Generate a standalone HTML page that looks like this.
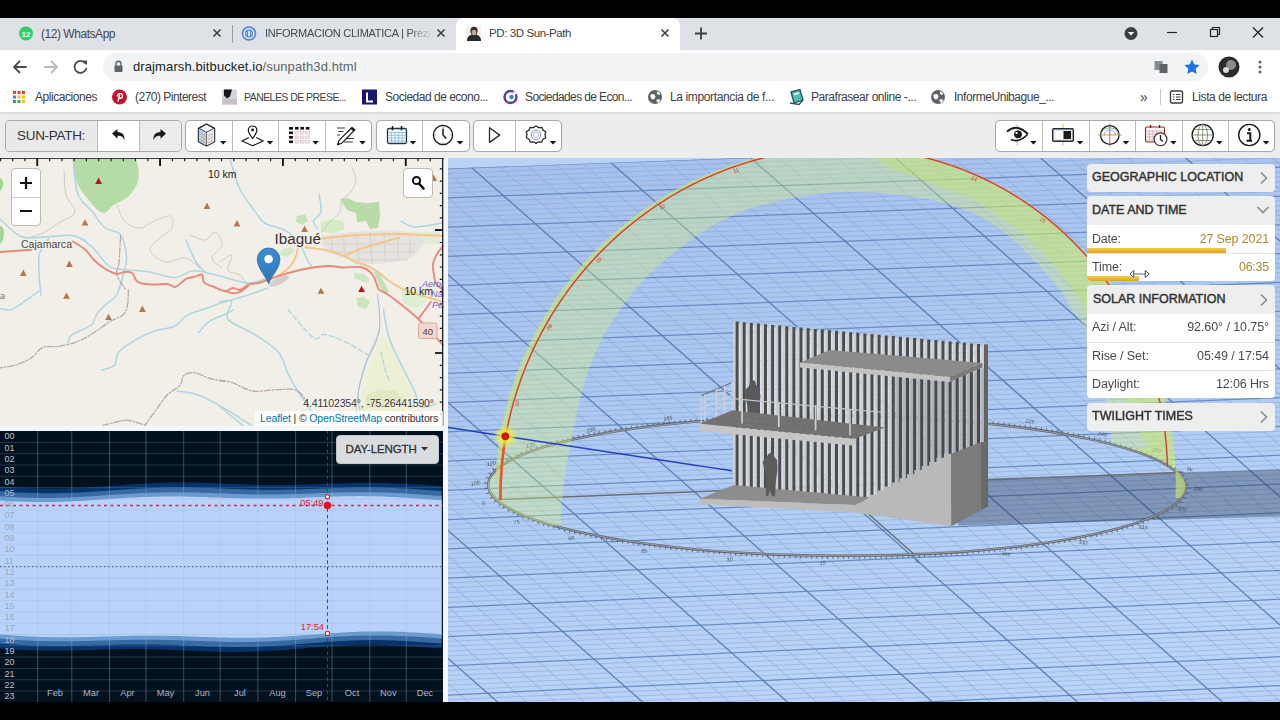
<!DOCTYPE html>
<html lang="es">
<head>
<meta charset="utf-8">
<title>PD: 3D Sun-Path</title>
<style>
*{box-sizing:border-box;margin:0;padding:0}
html,body{width:1280px;height:720px;overflow:hidden;background:#000}
body{font-family:"Liberation Sans",sans-serif;position:relative;color:#222}
.abs{position:absolute}
#top{left:0;top:0;width:1280px;height:18px;background:#000}
#bot{left:0;top:702px;width:1280px;height:18px;background:#000}
#tabs{left:0;top:18px;width:1280px;height:32px;background:#dee1e6}
#addr{left:0;top:50px;width:1280px;height:34px;background:#fff}
#bm{left:0;top:84px;width:1280px;height:29px;background:#fff;border-bottom:1px solid #dadce0}
.tabtxt{position:absolute;margin-top:.5px;font-size:12px;color:#45494d;white-space:nowrap;letter-spacing:-0.1px}
.bmtxt{position:absolute;top:6px;font-size:12px;color:#3c4043;white-space:nowrap;letter-spacing:-0.15px}
#omni{left:103px;top:53px;width:1105px;height:28px;border-radius:14px;background:#f1f3f4}
#tool{left:0;top:113px;width:1280px;height:45px;background:#ededed;border-top:1px solid #e0e0e0}
.grp{position:absolute;top:120px;height:32px;border:1px solid #a9a9a9;border-radius:5px;background:#fff;overflow:hidden;box-shadow:0 0 1px rgba(0,0,0,.15)}
.grp i{position:absolute;top:0;width:1px;height:30px;background:#bdbdbd}

.ph{letter-spacing:0;position:absolute;left:1086.5px;width:188px;background:#eeeeee;font-weight:normal;-webkit-text-stroke:.45px #333;font-size:12.500px;color:#333;padding-left:5.500px;white-space:nowrap}
.pr{position:absolute;left:1086.5px;width:188px;background:#fff;font-size:12.500px;color:#4a4a4a;white-space:nowrap;letter-spacing:-.08px;border-top:1px solid #e4e4e4}
.pr b{position:absolute;left:5.500px;font-weight:normal}
.pr s{position:absolute;right:5.500px;text-decoration:none}
.chev{position:absolute;right:6px}
</style>
</head>
<body>
<div class="abs" id="top"></div>
<div class="abs" id="tabs"></div>
<div class="abs" id="addr"></div>
<div class="abs" id="omni"></div>
<div class="abs" id="bm"></div>
<div class="abs" id="tool"></div>

<!-- chrome tabs -->
<div class="abs" style="left:456px;top:18px;width:224px;height:32px;background:#fff;border-radius:8px 8px 0 0"></div>
<svg class="abs" style="left:0;top:18px" width="1280" height="95" viewBox="0 18 1280 95">
 <circle cx="26" cy="33.5" r="7" fill="#2bd366"/>
 <text x="26" y="36.5" font-size="8" font-weight="bold" fill="#fff" text-anchor="middle" font-family="Liberation Sans, sans-serif">12</text>
 <g stroke="#3c4043" stroke-width="1.6" fill="none">
  <path d="M213.5 29.5l7 7m0-7l-7 7"/><path d="M437.5 29.5l7 7m0-7l-7 7"/><path d="M661.5 29.5l7 7m0-7l-7 7"/>
  <path d="M695 33.5h12m-6-6v12" stroke-width="1.8"/>
 </g>
 <rect x="232" y="25" width="1" height="18" fill="#9a9da1"/>
 <circle cx="249" cy="33.5" r="6.5" fill="#dbe7fb" stroke="#4f83d8" stroke-width="1.6"/>
 <circle cx="249" cy="33.5" r="3.4" fill="none" stroke="#4f83d8" stroke-width="1.2"/>
 <path d="M247.5 31v5M250.5 31v5" stroke="#4f83d8" stroke-width="1"/>
 <!-- favicon portrait -->
 <rect x="466" y="26" width="15" height="15" fill="#f4f1ee"/>
 <ellipse cx="474" cy="31" rx="3.6" ry="4.2" fill="#3a2f2a"/>
 <path d="M467 41c0-5 3-6.500 7-6.500s7 1.500 7 6.500z" fill="#2a2a2e"/>
 <ellipse cx="474" cy="32.500" rx="2.300" ry="2.800" fill="#c9a791"/>
 <!-- window buttons -->
 <circle cx="1131" cy="33.5" r="6.500" fill="#3c4043"/><path d="M1127.800 32l3.200 3.600 3.200-3.600z" fill="#fff"/>
 <path d="M1167 32.500h10" stroke="#222" stroke-width="1.200"/>
 <rect x="1210.500" y="29.500" width="7" height="7" fill="none" stroke="#222" stroke-width="1.200"/><path d="M1212.500 29.500v-2h7v7h-2" fill="none" stroke="#222" stroke-width="1.200"/>
 <path d="M1253 27.500l10 10m0-10l-10 10" stroke="#222" stroke-width="1.300"/>
 <!-- nav -->
 <g stroke="#4a4d51" stroke-width="1.800" fill="none" stroke-linecap="round" stroke-linejoin="round">
  <path d="M26 67H14.500m5-5.500L14 67l5.500 5.500"/>
  <path d="M45 67h11.500m-5-5.500L57 67l-5.500 5.500" stroke="#b8bbbe"/>
  <path d="M85.500 63.500a6 6 0 1 0 .8 5"/>
 </g>
 <path d="M82.500 60.500h4.500v4.500z" fill="#4a4d51"/>
 <rect x="114.500" y="65.500" width="8" height="6.500" rx="1" fill="#5f6368"/><path d="M116 66v-2.200a2.500 2.500 0 0 1 5 0V66" fill="none" stroke="#5f6368" stroke-width="1.400"/>
 <!-- right of omnibox -->
 <rect x="1154.500" y="61" width="8" height="9" fill="#8a8d91"/><rect x="1159.500" y="64" width="8" height="9" fill="#5f6368"/>
 <path d="M1192 59.500l2.300 4.900 5.300.6-3.900 3.700 1 5.300-4.700-2.600-4.700 2.600 1-5.300-3.900-3.700 5.300-.6z" fill="#1a73e8"/>
 <circle cx="1229" cy="67" r="10.500" fill="#2b2b2b"/><circle cx="1231" cy="65" r="5" fill="#8d8d8d"/><circle cx="1226" cy="70" r="3" fill="#d9d9d9"/>
 <circle cx="1260" cy="62" r="1.500" fill="#5f6368"/><circle cx="1260" cy="67" r="1.500" fill="#5f6368"/><circle cx="1260" cy="72" r="1.500" fill="#5f6368"/>
 <!-- bookmarks icons -->
 <g>
  <rect x="13" y="91" width="3" height="3" fill="#ea4335"/><rect x="17.500" y="91" width="3" height="3" fill="#ea4335"/><rect x="22" y="91" width="3" height="3" fill="#ea4335"/>
  <rect x="13" y="95.500" width="3" height="3" fill="#4285f4"/><rect x="17.500" y="95.500" width="3" height="3" fill="#fbbc05"/><rect x="22" y="95.500" width="3" height="3" fill="#fbbc05"/>
  <rect x="13" y="100" width="3" height="3" fill="#34a853"/><rect x="17.500" y="100" width="3" height="3" fill="#34a853"/><rect x="22" y="100" width="3" height="3" fill="#fbbc05"/>
 </g>
 <circle cx="119.500" cy="97" r="7.500" fill="#c8102e"/><path d="M118 101.500l1.500-6.500m-2 1.500c-.8-3 4.800-4.200 5-0.800.2 2.600-2.600 3.400-3.200 1.600" stroke="#fff" stroke-width="1.400" fill="none"/>
 <rect x="222" y="89.500" width="15" height="15" fill="#d8d2d9"/><path d="M224 89.500h8l-2 7-3 2-3-3z" fill="#15151c"/><rect x="222" y="99" width="15" height="5.500" fill="#c9bfc4"/>
 <rect x="362" y="89.500" width="15" height="15" fill="#1b1470"/><path d="M367 92.500v9h6" stroke="#fff" stroke-width="2" fill="none"/>
 <circle cx="510.500" cy="97" r="6" fill="none" stroke="#5b3d99" stroke-width="2.400"/><circle cx="511.500" cy="97" r="2.300" fill="#2a8dd6"/><path d="M513 91l4 2-3 3z" fill="#fff"/>
 <g fill="#5f6368"><circle cx="655" cy="97" r="7"/><circle cx="938" cy="97" r="7"/></g>
 <g fill="#fff"><path d="M650.500 94.500l3.500-.5 1.500 2.500-1 2.500-2.500.5-1.500-2.500zM656 100l3-1 1.500 1.500-2.500 2.500zM657 91.500l3 1.500-.5 2-2.500-1z"/><path d="M933.500 94.500l3.500-.5 1.500 2.500-1 2.500-2.500.5-1.500-2.500zM939 100l3-1 1.500 1.500-2.500 2.500zM940 91.500l3 1.500-.5 2-2.500-1z"/></g>
 <path d="M791 92l9-2.500 3 10.500-9 3z" fill="#4dbfa8" stroke="#2d4f63" stroke-width="1.300"/><path d="M794 94.500l5-1.500" stroke="#fff" stroke-width="1.500"/><path d="M790 103l9 1.500 4-4.500" fill="none" stroke="#2d4f63" stroke-width="1.300"/>
 <text x="1140" y="101.500" font-size="14" fill="#3c4043" font-family="Liberation Sans, sans-serif">»</text>
 <rect x="1160" y="89" width="1" height="16" fill="#c4c7cb"/>
 <rect x="1170.500" y="91" width="12" height="12" rx="1.500" fill="none" stroke="#3c4043" stroke-width="1.400"/><path d="M1173 94.500h1.500m1.500 0h4.500M1173 97h1.500m1.500 0h4.500M1173 99.500h1.500m1.500 0h4.500" stroke="#3c4043" stroke-width="1.200"/>
</svg>
<div class="tabtxt" style="left:41px;top:26px;letter-spacing:-.46px">(12) WhatsApp</div>
<div class="tabtxt" style="left:265px;top:26.5px;font-size:11px;letter-spacing:-.25px;width:168px;overflow:hidden;-webkit-mask-image:linear-gradient(90deg,#000 85%,transparent)">INFORMACION CLIMATICA | Prezi</div>
<div class="tabtxt" style="left:489px;top:26px;color:#3c4043;font-size:11.5px;letter-spacing:-.41px">PD: 3D Sun-Path</div>
<div class="abs" style="left:133px;top:59px;font-size:13px;color:#202124;white-space:nowrap;letter-spacing:.11px">drajmarsh.bitbucket.io<span style="color:#5f6368">/sunpath3d.html</span></div>
<div class="bmtxt" style="left:35px;top:90px;letter-spacing:-0.45px">Aplicaciones</div>
<div class="bmtxt" style="left:135px;top:90px;letter-spacing:-0.51px">(270) Pinterest</div>
<div class="bmtxt" style="left:244px;top:91px;font-size:10.5px;letter-spacing:-.55px">PANELES DE PRESE...</div>
<div class="bmtxt" style="left:385px;top:90px;letter-spacing:-0.49px">Sociedad de econo...</div>
<div class="bmtxt" style="left:525px;top:90px;letter-spacing:-0.62px">Sociedades de Econ...</div>
<div class="bmtxt" style="left:670px;top:90px;letter-spacing:-0.37px">La importancia de f...</div>
<div class="bmtxt" style="left:811px;top:90px;letter-spacing:-0.45px">Parafrasear online -...</div>
<div class="bmtxt" style="left:954px;top:90px;letter-spacing:-0.46px">InformeUnibague_...</div>
<div class="bmtxt" style="left:1192px;top:90px;letter-spacing:-0.40px">Lista de lectura</div>


<!-- app toolbar -->
<div class="grp" style="left:5px;width:177px"><div class="abs" style="left:0;top:0;width:92px;height:30px;background:#e9e9e9"></div><div class="abs" style="left:134px;top:0;width:42px;height:30px;background:#ececec"></div><i style="left:91px"></i><i style="left:133px"></i></div>
<div class="grp" style="left:185px;width:187px"><i style="left:46px"></i><i style="left:92px"></i><i style="left:139px"></i></div>
<div class="grp" style="left:376px;width:94px"><i style="left:45px"></i></div>
<div class="grp" style="left:473px;width:89px"><i style="left:41px"></i></div>
<div class="grp" style="left:995px;width:280px"><i style="left:46px"></i><i style="left:93px"></i><i style="left:139px"></i><i style="left:186px"></i><i style="left:232px"></i></div>
<div class="abs" style="left:17px;top:128px;font-size:13.5px;color:#333;white-space:nowrap;letter-spacing:-.3px">SUN-PATH:</div>
<svg class="abs" style="left:0;top:113px" width="1280" height="45" viewBox="0 113 1280 45">
 <g fill="#111">
  <path d="M220 141h6.400l-3.200 3.600z"/><path d="M266.800 141h6.400l-3.200 3.600z"/><path d="M312.400 141h6.400l-3.200 3.600z"/><path d="M359.300 141h6.400l-3.200 3.600z"/>
  <path d="M409.800 141h6.400l-3.200 3.600z"/><path d="M456.800 141h6.400l-3.200 3.600z"/><path d="M549.800 141h6.400l-3.200 3.600z"/>
  <path d="M1030.200 141h6.400l-3.200 3.600z"/><path d="M1076.800 141h6.400l-3.200 3.600z"/><path d="M1122.800 141h6.400l-3.200 3.600z"/><path d="M1170.200 141h6.400l-3.200 3.600z"/><path d="M1216.100 141h6.400l-3.200 3.600z"/><path d="M1262.800 141h6.400l-3.200 3.600z"/>
 </g>
 <!-- undo / redo -->
 <path d="M112 133.500l5.500-4.500v3c5 .3 7.500 3 7 8.500-1-3.500-3-4.800-7-4.800v3z" fill="#1a1a1a"/>
 <path d="M166 133.500l-5.500-4.500v3c-5 .3-7.500 3-7 8.500 1-3.500 3-4.800 7-4.800v3z" fill="#1a1a1a"/>
 <!-- building -->
 <path d="M206.500 124l8 4.300v13.400l-8 4.300-8-4.300v-13.400z" fill="#eef3fb" stroke="#1a1a1a" stroke-width="1.400" stroke-linejoin="round"/>
 <path d="M198.500 128.300l8 4.300 8-4.300M206.500 132.600v13.400" fill="none" stroke="#1a1a1a" stroke-width="1.100"/>
 <path d="M198.800 128.500l7.500 4v13l-7.500-4z" fill="#b9cdf0"/><path d="M206.800 132.600l7.400-4v13l-7.400 4z" fill="#e6e9f5"/>
 <g fill="#e0a63c"><rect x="201" y="133.500" width="1.300" height="1.600"/><rect x="203.500" y="134.800" width="1.300" height="1.600"/><rect x="201" y="136.800" width="1.300" height="1.600"/><rect x="203.500" y="138.100" width="1.300" height="1.600"/><rect x="201" y="140.100" width="1.300" height="1.600"/><rect x="203.500" y="141.400" width="1.300" height="1.600"/>
 <rect x="208.500" y="134.800" width="1.300" height="1.600"/><rect x="211" y="133.500" width="1.300" height="1.600"/><rect x="208.500" y="138.100" width="1.300" height="1.600"/><rect x="211" y="136.800" width="1.300" height="1.600"/><rect x="208.500" y="141.400" width="1.300" height="1.600"/><rect x="211" y="140.100" width="1.300" height="1.600"/></g>
 <!-- map pin -->
 <path d="M252.600 138.500c-3-4-4.300-6-4.300-8.200a4.300 4.300 0 0 1 8.600 0c0 2.200-1.300 4.200-4.300 8.200z" fill="#fff" stroke="#1a1a1a" stroke-width="1.200"/><circle cx="252.600" cy="130" r="1.400" fill="#1a1a1a"/>
 <path d="M249 137.500l-7 3.500 10.600 4.800 10.600-4.800-7-3.500" fill="none" stroke="#1a1a1a" stroke-width="1.200" stroke-linejoin="round"/>
 <!-- table -->
 <g fill="#111"><rect x="289" y="127" width="4" height="2.600"/><rect x="295" y="127" width="3.600" height="2.600"/><rect x="300.400" y="127" width="3.600" height="2.600"/><rect x="305.800" y="127" width="3.600" height="2.600"/><rect x="289" y="131.500" width="4" height="2.600"/><rect x="289" y="136" width="4" height="2.600"/><rect x="289" y="140.500" width="4" height="2.600"/></g>
 <g fill="#f4ecef" stroke="#c9a5a8" stroke-width=".5"><rect x="295" y="131.500" width="3.600" height="2.600"/><rect x="300.400" y="131.500" width="3.600" height="2.600"/><rect x="305.800" y="131.500" width="3.600" height="2.600"/><rect x="295" y="136" width="3.600" height="2.600"/><rect x="300.400" y="136" width="3.600" height="2.600"/><rect x="305.800" y="136" width="3.600" height="2.600"/><rect x="295" y="140.500" width="3.600" height="2.600"/><rect x="300.400" y="140.500" width="3.600" height="2.600"/><rect x="305.800" y="140.500" width="3.600" height="2.600"/></g>
 <!-- pencil + lines -->
 <g stroke="#3a3a3a" stroke-width="1.100"><path d="M337 128h8M338.500 131.500h5M337 135h3M346 138.500h8M344 142h9"/></g>
 <path d="M352 127.500l2.800 2.300-13 13.400-4.300 1.600 1.500-4.400z" fill="#fff" stroke="#1a1a1a" stroke-width="1.200" stroke-linejoin="round"/><path d="M350.500 128.800l3 2.600 1.300-1.500-2.800-2.400z" fill="#1a1a1a"/><path d="M337.500 144.800l2.300-.8-1.500-1.500z" fill="#1a1a1a"/>
 <!-- calendar -->
 <rect x="387.500" y="128.500" width="19" height="15" rx="1.500" fill="#f2f8fc" stroke="#1c3a4a" stroke-width="1.300"/>
 <g stroke="#7fb3cf" stroke-width=".7"><path d="M388 132.500h18M388 135.300h18M388 138.100h18M388 140.900h18M391.500 132v11M395 132v11M398.600 132v11M402.200 132v11"/></g>
 <path d="M392.500 126v4.200M401.500 126v4.200" stroke="#1a1a1a" stroke-width="1.500"/>
 <!-- clock -->
 <circle cx="443" cy="135" r="9.600" fill="#fff" stroke="#1a1a1a" stroke-width="1.300"/>
 <path d="M443 128.500v6.500l3.300 3.400" fill="none" stroke="#1a1a1a" stroke-width="1.500"/>
 <path d="M443 126v2M443 142v2M434 135h2M450 135h2" stroke="#d98b3a" stroke-width="1"/>
 <!-- play -->
 <path d="M489.500 127.800v14.600l10.200-7.300z" fill="#fff" stroke="#2a2a2a" stroke-width="1.300" stroke-linejoin="round"/>
 <!-- gear -->
 <path d="M536 124.800l2.700 1.600 3.100-.3 1.200 2.800 2.700 1.600-.7 3 .7 3-2.700 1.600-1.200 2.800-3.100-.3-2.700 1.600-2.700-1.600-3.100.3-1.200-2.800-2.700-1.600.7-3-.7-3 2.700-1.600 1.200-2.800 3.100.3z" fill="#fff" stroke="#2a2a2a" stroke-width="1.300" stroke-linejoin="round" transform="translate(0,1.200)"/>
 <circle cx="536" cy="135" r="4.600" fill="none" stroke="#8a8aa8" stroke-width="1"/><circle cx="536" cy="135" r="2.600" fill="none" stroke="#9ab0d8" stroke-width=".9"/>
 <!-- eye -->
 <path d="M1017.200 124v22" stroke="#e8a860" stroke-width=".9"/>
 <path d="M1007 131.500c4-3.200 8-4.300 12-3.300 3.500.9 6.500 3.200 9 5.800" fill="none" stroke="#1a1a1a" stroke-width="2"/>
 <path d="M1011 139.500c5 2.300 11 .5 16.500-5" fill="none" stroke="#1a1a1a" stroke-width="1.700"/>
 <circle cx="1018" cy="134.300" r="3.900" fill="#1a1a1a"/><circle cx="1016.600" cy="133" r="1.100" fill="#fff"/>
 <!-- contrast rect -->
 <path d="M1063 124v22" stroke="#e8a860" stroke-width=".9"/>
 <rect x="1052.700" y="128.700" width="20.600" height="12.600" rx="1" fill="#dbe9f6" stroke="#2a2a2a" stroke-width="1.400"/>
 <rect x="1055.500" y="131" width="8" height="8" fill="#fff"/><rect x="1063.500" y="131" width="7.500" height="8" fill="#1a1a1a"/>
 <!-- crosshair circle -->
 <circle cx="1109.800" cy="135" r="9.300" fill="#fff" stroke="#1a1a1a" stroke-width="1.300"/>
 <path d="M1098 135h24" stroke="#c9963c" stroke-width=".9"/><path d="M1109.800 123.500v23" stroke="#b24a8a" stroke-width=".9"/>
 <path d="M1101 135c1-5 4-7 8.800-7s7.800 2 8.800 7" fill="none" stroke="#5aa7a0" stroke-width=".8"/><path d="M1104 135c.8-3.500 2.800-5 5.800-5s5 1.500 5.800 5" fill="none" stroke="#8d7fc0" stroke-width=".7"/>
 <!-- calendar clock -->
 <rect x="1145.500" y="127" width="19" height="15" rx="1.500" fill="#fdf6f4" stroke="#8a2a2a" stroke-width="1.100"/>
 <g stroke="#d39ab0" stroke-width=".7"><path d="M1146 131h18M1146 134h18M1146 137h18M1146 140h18M1149.500 130.500v11M1153 130.500v11M1156.600 130.500v11M1160.200 130.500v11"/></g>
 <path d="M1150.500 125v3M1159.500 125v3" stroke="#5a1a1a" stroke-width="1.300"/>
 <circle cx="1160.500" cy="139.300" r="6.400" fill="#fff" stroke="#3a3a3a" stroke-width="1.200"/><path d="M1160.500 135v4.500l2.300 2" fill="none" stroke="#1a1a1a" stroke-width="1.300"/>
 <!-- globe -->
 <circle cx="1202.700" cy="135" r="10.600" fill="#fff" stroke="#1a1a1a" stroke-width="1.300"/>
 <g fill="none" stroke="#6a7a5a" stroke-width=".8"><ellipse cx="1202.700" cy="135" rx="4.800" ry="10.600"/><path d="M1202.700 124.400v21.200M1192.100 135h21.200M1194 129.500h17.400M1194 140.500h17.400"/></g>
 <!-- info -->
 <circle cx="1249.300" cy="135" r="10.600" fill="#fff" stroke="#1a1a1a" stroke-width="1.400"/>
 <circle cx="1249.300" cy="129.600" r="1.500" fill="#1a1a1a"/><path d="M1247 133.200h3.300v7.300M1246.500 140.700h5.600" fill="none" stroke="#1a1a1a" stroke-width="2"/>
</svg>

<!-- map -->
<div class="abs" style="left:0;top:157px;width:449px;height:545px;background:#f3f6fa"></div>
<svg class="abs" style="left:0;top:158px" width="443.500" height="268" viewBox="0 158 443.500 268">
<rect x="0" y="158" width="444" height="272" fill="#f2efe9"/>
<path d="M73 158h62c4 8 5 18 2 26-4 10-12 16-20 19-6 2-8 8-12 10-5 0-9-4-13-9-8-9-15-18-17-28z" fill="#b5dba7"/>
<path d="M0 178c4 1 4 8 1 12l-1 1zM0 226c5 0 5 10 2 16l-2 2z" fill="#9fd694"/>
<path d="M340 199l8-1 7 4 12 1 12-1 1 14-2 12-8 1-4-8-9 1-1-9-9-3z" fill="#b8dba9"/>
<path d="M321 222l10-3 12 2 2 8-10 4-14-1z" fill="#d5ebc6"/><path d="M297 216l8-2 3 7-6 4-6-3z" fill="#c6e3b8"/>
<path d="M281 250l10-3 4 4-8 6-7-2z" fill="#d3e8c6"/><path d="M354 273l10 1 6 6-4 3-12-5z" fill="#d0e6c2"/>
<path d="M356 298l8-1 6 5-4 7-8-2z" fill="#c9e3ba"/><path d="M401 290h24l1 12-10 6-13-4z" fill="#dcefd0"/>
<path d="M380 336l7 3 14 28 13 26 6 14-20 6-24 3-16-4 1-14 5-24 9-22z" fill="#eef0d6"/><path d="M366 395l14-6 16 2 8 10-20 6-18 1z" fill="#dfe8c2"/>
<path d="M400 232h40v12h-38z" fill="#e2ecd6"/><path d="M374 272l4 12 6 10 5-2-6-12-5-10z" fill="#c3e0b6"/>
<path d="M321 236l30-4 40-2 26 3 8 10-12 14-20 6-30 1-26-8-14-9z" fill="#e6e2de"/>
<g stroke="#cfcac6" stroke-width=".7" fill="none"><path d="M332 236v18M343 234l2 24M356 232l3 30M370 232l2 32M384 232l1 30M398 233v26M410 236v18M326 244h90M330 252h84M352 260h56"/></g>
<path d="M64.0 170.0 C64.3 174.2 64.2 188.0 66.0 195.0 C67.8 202.0 76.0 207.5 75.0 212.0 C74.0 216.5 65.0 218.7 60.0 222.0 C55.0 225.3 50.3 229.3 45.0 232.0 C39.7 234.7 30.8 237.0 28.0 238.0" fill="none" stroke="#c4bfba" stroke-width="0.8" stroke-linecap="round" stroke-linejoin="round" />
<path d="M117.0 205.0 C118.3 207.8 121.2 218.2 125.0 222.0 C128.8 225.8 135.5 228.0 140.0 228.0 C144.5 228.0 147.0 224.0 152.0 222.0 C157.0 220.0 166.7 215.0 170.0 216.0 C173.3 217.0 173.7 224.3 172.0 228.0 C170.3 231.7 163.7 234.3 160.0 238.0 C156.3 241.7 149.2 246.0 150.0 250.0 C150.8 254.0 159.2 260.7 165.0 262.0 C170.8 263.3 179.2 257.0 185.0 258.0 C190.8 259.0 197.5 266.3 200.0 268.0" fill="none" stroke="#c4bfba" stroke-width="0.8" stroke-linecap="round" stroke-linejoin="round" />
<path d="M190.0 235.0 C192.5 235.8 200.8 240.5 205.0 240.0 C209.2 239.5 212.2 231.2 215.0 232.0 C217.8 232.8 222.5 240.7 222.0 245.0 C221.5 249.3 212.0 254.2 212.0 258.0 C212.0 261.8 220.3 266.3 222.0 268.0" fill="none" stroke="#c4bfba" stroke-width="0.8" stroke-linecap="round" stroke-linejoin="round" />
<path d="M220.0 262.0 C222.0 260.8 230.7 253.7 232.0 255.0 C233.3 256.3 226.7 266.7 228.0 270.0 C229.3 273.3 237.0 272.7 240.0 275.0 C243.0 277.3 245.0 282.5 246.0 284.0" fill="none" stroke="#c4bfba" stroke-width="0.8" stroke-linecap="round" stroke-linejoin="round" />
<path d="M352.0 168.0 C352.7 170.0 356.2 176.0 356.0 180.0 C355.8 184.0 353.3 188.7 351.0 192.0 C348.7 195.3 343.8 196.7 342.0 200.0 C340.2 203.3 342.0 208.3 340.0 212.0 C338.0 215.7 333.0 218.7 330.0 222.0 C327.0 225.3 323.3 230.3 322.0 232.0" fill="none" stroke="#c4bfba" stroke-width="0.8" stroke-linecap="round" stroke-linejoin="round" />
<path d="M379.5 329.0 C378.8 331.7 377.2 339.5 375.0 345.0 C372.8 350.5 368.3 356.2 366.0 362.0 C363.7 367.8 362.5 373.7 361.0 380.0 C359.5 386.3 357.8 392.0 357.0 400.0 C356.2 408.0 356.2 423.3 356.0 428.0" fill="none" stroke="#c4bfba" stroke-width="0.8" stroke-linecap="round" stroke-linejoin="round" />
<path d="M0.0 219.0 C3.6 221.9 13.3 233.8 21.4 236.7 C29.5 239.6 39.8 236.9 48.6 236.7 C57.4 236.5 66.9 234.1 74.0 235.7 C81.1 237.3 85.6 241.3 91.4 246.4 C97.2 251.5 103.5 262.1 109.0 266.0 C114.5 269.9 118.0 268.9 124.5 269.8 C131.0 270.8 139.4 270.4 147.8 271.7 C156.2 273.0 167.2 277.7 175.0 277.5 C182.8 277.3 186.2 270.7 194.5 270.7 C202.8 270.7 215.9 275.4 225.0 277.5 C234.1 279.6 241.8 282.9 249.0 283.0 C256.2 283.1 264.8 278.8 268.0 278.0" fill="none" stroke="#add6e1" stroke-width="1.5" stroke-linecap="round" stroke-linejoin="round" />
<path d="M73.0 158.0 C73.8 164.0 74.4 184.8 77.8 194.0 C81.2 203.2 88.9 207.3 93.4 213.0 C97.9 218.7 100.5 224.4 105.0 228.0 C109.5 231.6 117.0 230.1 120.6 234.8 C124.2 239.5 125.8 250.1 126.4 256.0 C127.1 261.9 126.1 263.5 124.5 270.0 C122.9 276.5 119.3 289.7 116.7 295.0 C114.1 300.3 112.2 298.6 109.0 301.7 C105.8 304.8 100.2 309.4 97.3 313.3 C94.4 317.2 95.6 321.4 91.4 325.0 C87.2 328.6 75.9 331.8 72.0 334.7 C68.1 337.6 68.7 341.2 68.0 342.5" fill="none" stroke="#add6e1" stroke-width="1.5" stroke-linecap="round" stroke-linejoin="round" />
<path d="M40.8 295.0 C40.5 288.5 37.7 265.4 39.0 256.0 C40.3 246.6 47.0 241.5 48.6 238.6" fill="none" stroke="#add6e1" stroke-width="1.5" stroke-linecap="round" stroke-linejoin="round" />
<path d="M0.0 308.5 C1.9 308.7 7.5 310.8 11.7 309.5 C15.9 308.2 20.8 303.8 25.3 300.7 C29.9 297.6 36.7 292.6 39.0 291.0" fill="none" stroke="#add6e1" stroke-width="1.5" stroke-linecap="round" stroke-linejoin="round" />
<path d="M268.0 288.0 C264.2 289.3 252.2 293.7 245.0 296.0 C237.8 298.3 231.5 299.6 225.0 301.7 C218.5 303.8 212.4 306.2 206.0 308.5 C199.6 310.8 191.9 312.4 186.7 315.3 C181.5 318.2 180.2 323.4 175.0 326.0 C169.8 328.6 162.1 328.5 155.6 330.8 C149.1 333.1 142.2 336.0 136.0 339.6 C129.8 343.2 122.1 348.0 118.6 352.2 C115.0 356.4 117.5 362.0 114.7 365.0 C111.9 368.0 104.1 369.2 102.0 370.0" fill="none" stroke="#add6e1" stroke-width="1.5" stroke-linecap="round" stroke-linejoin="round" />
<path d="M233.0 310.0 C231.7 310.7 228.8 312.5 225.0 314.3 C221.2 316.1 214.4 317.9 210.0 321.0 C205.6 324.1 200.3 330.8 198.4 332.8" fill="none" stroke="#add6e1" stroke-width="1.5" stroke-linecap="round" stroke-linejoin="round" />
<path d="M177.0 391.0 C180.6 391.7 190.4 392.1 198.4 395.0 C206.4 397.9 217.6 404.4 225.0 408.6 C232.4 412.8 238.0 416.8 243.0 420.0 C248.0 423.2 253.0 426.7 255.0 428.0" fill="none" stroke="#add6e1" stroke-width="1.5" stroke-linecap="round" stroke-linejoin="round" />
<path d="M229.7 158.0 C231.3 163.0 235.3 179.1 239.5 188.0 C243.7 196.9 250.8 205.6 255.0 211.4 C259.2 217.2 259.8 219.9 264.7 223.0 C269.6 226.1 278.7 227.1 284.2 230.0 C289.7 232.9 293.9 235.6 297.8 240.6 C301.7 245.6 305.2 255.8 307.5 260.0 C309.8 264.2 310.8 265.0 311.4 266.0" fill="none" stroke="#add6e1" stroke-width="1.5" stroke-linecap="round" stroke-linejoin="round" />
<path d="M319.0 194.0 C319.3 196.9 321.9 206.9 321.0 211.4 C320.1 215.9 314.0 218.1 313.4 221.0 C312.8 223.9 316.6 227.7 317.3 229.0" fill="none" stroke="#add6e1" stroke-width="1.5" stroke-linecap="round" stroke-linejoin="round" />
<path d="M401.0 221.0 C403.2 222.0 407.7 226.7 414.5 227.0 C421.3 227.3 437.2 223.7 441.8 223.0" fill="none" stroke="#add6e1" stroke-width="1.5" stroke-linecap="round" stroke-linejoin="round" />
<path d="M220.0 301.7 C221.9 301.7 230.4 298.8 231.7 301.7 C233.0 304.6 223.9 313.5 227.8 319.0 C231.7 324.5 246.6 329.2 255.0 334.7 C263.4 340.2 272.9 345.7 278.4 352.2 C283.9 358.7 284.8 367.1 288.0 373.6 C291.2 380.1 294.2 385.1 297.8 391.0 C301.4 396.9 306.5 403.9 309.5 408.7 C312.5 413.5 314.9 418.1 316.0 420.0" fill="none" stroke="#add6e1" stroke-width="1.5" stroke-linecap="round" stroke-linejoin="round" />
<path d="M220.0 406.7 C221.6 408.0 225.8 411.3 229.7 414.5 C233.6 417.7 241.0 424.1 243.3 426.0" fill="none" stroke="#add6e1" stroke-width="1.5" stroke-linecap="round" stroke-linejoin="round" />
<path d="M383.4 309.5 C384.4 314.4 386.1 328.9 389.3 338.6 C392.6 348.3 398.7 359.1 402.9 367.8 C407.1 376.5 411.6 384.5 414.5 391.0 C417.4 397.5 416.8 404.5 420.4 406.7 C424.0 408.9 433.4 404.4 436.0 404.0" fill="none" stroke="#add6e1" stroke-width="1.5" stroke-linecap="round" stroke-linejoin="round" />
<path d="M186.0 240.0 C187.7 243.7 192.8 256.7 196.0 262.0 C199.2 267.3 203.5 270.3 205.0 272.0" fill="none" stroke="#add6e1" stroke-width="1.5" stroke-linecap="round" stroke-linejoin="round" />
<path d="M377.6 294.0 C377.9 299.8 381.1 318.3 379.5 329.0 C377.9 339.7 371.1 348.9 367.9 358.0 C364.6 367.1 361.6 376.6 360.0 383.4 C358.4 390.2 358.0 394.6 358.0 399.0 C358.0 403.4 359.7 408.2 360.0 410.0" fill="none" stroke="#a7bfd6" stroke-width="1.1" stroke-linecap="round" stroke-linejoin="round" />
<path d="M288.0 309.5 C292.2 314.2 307.2 333.6 313.4 337.7 C319.6 341.8 319.5 333.6 325.0 334.4 C330.5 335.2 339.0 338.9 346.5 342.5 C354.0 346.1 365.9 353.8 369.8 356.0" fill="none" stroke="#a9d3df" stroke-width="1.3" stroke-linecap="round" stroke-linejoin="round" stroke-dasharray="5 3"/>
<path d="M381.0 352.0 C381.8 355.3 384.5 367.0 386.0 372.0 C387.5 377.0 389.3 380.3 390.0 382.0" fill="none" stroke="#a9d3df" stroke-width="1.3" stroke-linecap="round" stroke-linejoin="round" stroke-dasharray="5 3"/>
<path d="M128.3 290.0 C128.2 292.6 128.4 301.4 127.4 305.6 C126.4 309.8 125.6 312.6 122.5 315.3 C119.4 318.0 113.5 319.2 109.0 322.0 C104.5 324.8 100.5 328.6 95.3 331.8 C90.1 335.1 84.0 339.1 77.8 341.5 C71.6 343.9 64.1 345.4 58.3 346.4 C52.5 347.4 47.3 345.5 42.8 347.4 C38.2 349.3 35.5 355.1 31.0 358.0 C26.4 360.9 20.7 363.4 15.5 365.0 C10.3 366.6 2.6 367.3 0.0 367.8" fill="none" stroke="#b9a7ab" stroke-width="1.3" stroke-linecap="round" stroke-linejoin="round" stroke-dasharray="6 2 1.500 2"/>
<path d="M225.0 381.0 C222.5 380.6 215.1 379.9 210.0 378.5 C204.9 377.1 198.9 373.2 194.5 372.7 C190.1 372.2 186.2 373.5 183.8 375.6 C181.4 377.7 182.8 382.1 180.0 385.3 C177.2 388.5 171.4 390.8 167.3 395.0 C163.2 399.2 159.3 405.6 155.6 410.6 C151.9 415.6 146.8 422.8 145.0 425.2" fill="none" stroke="#b9a7ab" stroke-width="1.3" stroke-linecap="round" stroke-linejoin="round" stroke-dasharray="6 2 1.500 2"/>
<path d="M103.0 425.2 C105.3 424.7 112.5 422.8 116.7 422.0 C120.9 421.2 123.7 419.8 128.4 420.3 C133.1 420.8 142.2 424.4 145.0 425.2" fill="none" stroke="#b9a7ab" stroke-width="1.3" stroke-linecap="round" stroke-linejoin="round" stroke-dasharray="6 2 1.500 2"/>
<path d="M220.0 381.0 C221.9 381.2 226.2 380.7 231.7 382.4 C237.2 384.1 245.2 389.8 253.0 391.0 C260.8 392.2 270.9 389.6 278.4 389.6 C285.9 389.6 292.6 388.1 297.8 391.0 C303.0 393.9 307.6 404.1 309.5 406.7" fill="none" stroke="#b9a7ab" stroke-width="1.3" stroke-linecap="round" stroke-linejoin="round" stroke-dasharray="6 2 1.500 2"/>
<path d="M120.6 236.0 C120.3 240.3 119.6 255.5 119.0 262.0 C118.4 268.5 115.8 270.3 117.0 275.0 C118.2 279.7 124.5 287.5 126.0 290.0" fill="none" stroke="#b9a7ab" stroke-width="1.3" stroke-linecap="round" stroke-linejoin="round" stroke-dasharray="6 2 1.500 2"/>
<path d="M321.0 238.7 C325.0 238.2 336.8 236.7 345.0 236.0 C353.2 235.3 360.8 234.8 370.0 234.5 C379.2 234.2 391.7 233.9 400.0 234.0 C408.3 234.1 412.5 234.7 420.0 235.0 C427.5 235.3 440.8 235.6 445.0 235.7" fill="none" stroke="#f3c68e" stroke-width="2" stroke-linecap="round" stroke-linejoin="round" />
<path d="M305.6 247.4 C308.8 247.8 318.5 248.6 325.0 250.0 C331.5 251.4 339.5 254.0 344.5 256.0 C349.5 258.0 351.1 260.3 355.0 262.0 C358.9 263.7 364.1 264.3 367.9 266.0 C371.7 267.7 374.8 269.8 378.0 272.0 C381.2 274.2 383.8 277.2 387.0 279.5 C390.2 281.8 393.7 284.1 397.0 286.0 C400.3 287.9 401.3 289.0 406.8 291.0 C412.3 293.0 424.0 296.2 430.0 298.0 C436.0 299.8 440.8 301.3 443.0 302.0" fill="none" stroke="#f3c68e" stroke-width="2" stroke-linecap="round" stroke-linejoin="round" />
<path d="M346.5 255.0 C348.8 254.0 354.4 251.0 360.0 249.0 C365.6 247.0 373.5 244.9 380.0 243.0 C386.5 241.1 395.8 238.6 399.0 237.7" fill="none" stroke="#f3c68e" stroke-width="2" stroke-linecap="round" stroke-linejoin="round" />
<path d="M297.8 248.4 C297.5 249.7 297.0 253.4 296.0 256.0 C295.0 258.6 293.8 261.5 292.0 264.0 C290.2 266.5 287.6 268.9 285.0 271.0 C282.4 273.1 277.8 275.7 276.4 276.6" fill="none" stroke="#f3c68e" stroke-width="2" stroke-linecap="round" stroke-linejoin="round" />
<path d="M306.0 247.0 C307.0 245.8 309.5 241.4 312.0 240.0 C314.5 238.6 319.5 238.9 321.0 238.7" fill="none" stroke="#f3c68e" stroke-width="2" stroke-linecap="round" stroke-linejoin="round" />
<path d="M0.0 252.0 C2.3 251.8 8.8 251.4 14.0 251.0 C19.2 250.6 28.2 249.9 31.0 249.7" fill="none" stroke="#e8897b" stroke-width="1.9" stroke-linecap="round" stroke-linejoin="round" />
<path d="M73.0 241.5 C75.1 242.9 82.3 247.1 85.6 250.0 C88.9 252.9 90.4 256.3 93.0 259.0 C95.6 261.7 98.3 264.0 101.0 266.0 C103.7 268.0 106.4 269.7 109.0 271.0 C111.6 272.3 114.0 273.8 116.7 274.0 C119.4 274.2 122.5 272.2 125.0 272.0 C127.5 271.8 130.2 271.7 132.0 273.0 C133.8 274.3 134.7 278.3 136.0 280.0 C137.3 281.7 137.2 282.2 140.0 283.0 C142.8 283.8 148.5 284.3 153.0 284.5 C157.5 284.7 163.3 283.6 167.0 284.0 C170.7 284.4 172.7 287.2 175.0 287.0 C177.3 286.8 179.1 284.4 181.0 283.0 C182.9 281.6 184.5 279.5 186.7 278.5 C188.9 277.5 191.4 277.6 194.0 277.0 C196.6 276.4 200.3 273.7 202.0 274.6 C203.7 275.5 202.0 280.3 204.0 282.4 C206.0 284.5 210.5 285.6 214.0 287.0 C217.5 288.4 221.8 290.8 225.0 291.0 C228.2 291.2 230.5 288.2 233.0 288.0 C235.5 287.8 237.3 290.6 240.0 290.0 C242.7 289.4 245.8 285.6 249.0 284.4 C252.2 283.2 255.7 283.8 259.0 283.0 C262.3 282.2 264.1 281.1 268.6 279.5 C273.1 277.9 280.8 275.3 286.0 273.7 C291.2 272.1 295.8 271.0 300.0 270.0 C304.2 269.0 306.6 268.5 311.4 267.8 C316.2 267.1 323.7 266.1 329.0 266.0 C334.3 265.9 338.5 267.4 343.0 267.5 C347.5 267.6 352.5 266.8 356.0 266.9 C359.5 267.0 361.7 267.2 364.0 268.0 C366.3 268.8 368.1 270.2 369.8 271.7 C371.5 273.2 373.0 275.4 374.0 277.0 C375.0 278.6 374.9 279.7 375.6 281.5 C376.3 283.3 377.4 286.6 378.0 288.0 C378.6 289.4 378.0 289.0 379.5 290.0 C381.0 291.0 384.4 292.4 387.0 294.0 C389.6 295.6 391.5 297.0 395.0 299.7 C398.5 302.4 404.1 306.8 408.0 310.0 C411.9 313.2 414.7 315.5 418.4 319.0 C422.1 322.5 425.9 326.7 430.0 331.0 C434.1 335.3 440.8 342.7 443.0 345.0" fill="none" stroke="#e8897b" stroke-width="1.9" stroke-linecap="round" stroke-linejoin="round" />
<path d="M418.4 319.0 C419.5 317.5 422.9 312.9 425.0 310.0 C427.1 307.1 430.0 303.1 431.0 301.7" fill="none" stroke="#e8897b" stroke-width="1.9" stroke-linecap="round" stroke-linejoin="round" />
<path d="M443.0 246.0 C442.0 247.3 438.7 251.0 437.0 254.0 C435.3 257.0 433.5 260.5 433.0 264.0 C432.5 267.5 433.5 271.8 434.0 275.0 C434.5 278.2 434.5 280.9 436.0 283.4 C437.5 285.9 441.8 288.9 443.0 290.0" fill="none" stroke="#e8897b" stroke-width="1.9" stroke-linecap="round" stroke-linejoin="round" />
<path d="M225.0 291.0 C226.2 291.3 229.5 292.8 232.0 293.0 C234.5 293.2 237.3 293.2 240.0 292.0 C242.7 290.8 246.7 287.0 248.0 286.0" fill="none" stroke="#e8897b" stroke-width="1.9" stroke-linecap="round" stroke-linejoin="round" />
<path d="M207.0 202.6l3.4 6.3h-6.8z" fill="#b3784b"/>
<path d="M85.0 219.3l3.4 6.3h-6.8z" fill="#b3784b"/>
<path d="M69.4 260.6l3.4 6.3h-6.8z" fill="#b3784b"/>
<path d="M23.3 269.6l3.4 6.3h-6.8z" fill="#b3784b"/>
<path d="M237.0 220.1l3.4 6.3h-6.8z" fill="#b3784b"/>
<path d="M304.6 225.6l3.4 6.3h-6.8z" fill="#b3784b"/>
<path d="M321.0 287.4l3.4 6.3h-6.8z" fill="#b3784b"/>
<path d="M66.5 292.4l3.4 6.3h-6.8z" fill="#b3784b"/>
<path d="M108.5 313.8l3.4 6.3h-6.8z" fill="#b3784b"/>
<path d="M142.4 305.6l3.4 6.3h-6.8z" fill="#b3784b"/>
<path d="M433.6 174.6l3.4 6.3h-6.8z" fill="#b3784b"/>
<path d="M98.6 177.6l3.4 6.3h-6.8z" fill="#c1121c"/>
<path d="M361.6 285.8l3.4 6.3h-6.8z" fill="#c1121c"/>
<rect x="0" y="158" width="444" height="1" fill="#3a3a3a"/>
<path d="M0.5 158v3.2M12.7 158v3.2M25.0 158v3.2M37.3 158v8M49.6 158v3.2M61.9 158v3.2M74.1 158v3.2M86.4 158v3.2M98.7 158v3.2M111.0 158v3.2M123.3 158v3.2M135.5 158v3.2M147.8 158v3.2M160.1 158v8M172.4 158v3.2M184.7 158v3.2M196.9 158v3.2M209.2 158v3.2M221.5 158v3.2M233.8 158v3.2M246.1 158v3.2M258.3 158v3.2M270.6 158v3.2M282.9 158v8M295.2 158v3.2M307.5 158v3.2M319.7 158v3.2M332.0 158v3.2M344.3 158v3.2M356.6 158v3.2M368.9 158v3.2M381.1 158v3.2M393.4 158v3.2M405.7 158v8M418.0 158v3.2M430.3 158v3.2" stroke="#1a1a1a" stroke-width="1.200" fill="none"/>
<path d="M37.3 158v8M160.1 158v8M282.900 158v8M405.700 158v8" stroke="#111" stroke-width="1.700"/>
<rect x="442" y="158" width="1.300" height="272" fill="#222"/>
<path d="M443 168.8h-3.2M443 181.1h-3.2M443 193.4h-3.2M443 205.6h-3.2M443 217.9h-3.2M443 230.2h-8M443 242.5h-3.2M443 254.8h-3.2M443 267.0h-3.2M443 279.3h-3.2M443 291.6h-3.2M443 303.9h-3.2M443 316.2h-3.2M443 328.4h-3.2M443 340.7h-3.2M443 353.0h-8M443 365.3h-3.2M443 377.6h-3.2M443 389.8h-3.2M443 402.1h-3.2M443 414.4h-3.2M443 426.7h-3.2" stroke="#1a1a1a" stroke-width="1.200" fill="none"/>
<path d="M443 230.200h-8M443 353h-8" stroke="#111" stroke-width="1.700"/>
<rect x="418.500" y="323" width="18.500" height="15.500" rx="2" fill="#f3d6d0" stroke="#d8a9a0" stroke-width="1"/>
<text x="427.800" y="334.500" font-size="9.500" fill="#444" text-anchor="middle" font-family="Liberation Sans, sans-serif">40</text>
<text x="21" y="247.500" font-size="11.500" fill="#4a4a4a" font-family="Liberation Sans, sans-serif" textLength="51" lengthAdjust="spacingAndGlyphs" stroke="#f2efe9" stroke-width="2" paint-order="stroke">Cajamarca</text>
<text x="274.500" y="243.800" font-size="15.500" fill="#333" font-family="Liberation Sans, sans-serif" textLength="46.500" lengthAdjust="spacingAndGlyphs" stroke="#f2efe9" stroke-width="2.500" paint-order="stroke">Ibagué</text>
<text x="208" y="178" font-size="10.500" fill="#222" font-family="Liberation Sans, sans-serif">10 km</text>
<text x="404.500" y="295" font-size="10.500" fill="#222" font-family="Liberation Sans, sans-serif">10 km</text>
<text x="422" y="287" font-size="9" font-style="italic" fill="#6a5fc0" font-family="Liberation Sans, sans-serif">Aerop</text><text x="431" y="297" font-size="9" font-style="italic" fill="#6a5fc0" font-family="Liberation Sans, sans-serif">Nac</text><text x="432" y="308" font-size="9" font-style="italic" fill="#6a5fc0" font-family="Liberation Sans, sans-serif">Per</text>
<text x="0" y="299" font-size="9" font-style="italic" fill="#666" font-family="Liberation Sans, sans-serif">a</text>
<defs><linearGradient id="mk" x1="0" y1="0" x2="0" y2="1"><stop offset="0" stop-color="#3d8ed1"/><stop offset="1" stop-color="#2f76b5"/></linearGradient></defs>
<ellipse cx="279" cy="281" rx="11" ry="3.500" fill="#000" opacity=".13" transform="rotate(-25 279 281)"/>
<path d="M268.600 283.800c-2.500-7.500-11.300-15.500-11.300-24.500a11.300 11.300 0 0 1 22.600 0c0 9-8.800 17-11.300 24.500z" fill="url(#mk)" stroke="#2a68a3" stroke-width=".8"/><circle cx="268.600" cy="259" r="4.300" fill="#fff"/>
</svg>
<div class="abs" style="left:10.500px;top:168px;width:30px;height:58px;background:#fff;border-radius:4px;border:1.500px solid #bdbab5"></div>
<div class="abs" style="left:12px;top:197px;width:28px;height:1px;background:#ccc"></div>
<svg class="abs" style="left:11px;top:168px" width="30" height="58"><path d="M9 15h12M15 9v12M9 43h12" stroke="#111" stroke-width="2.200"/></svg>
<div class="abs" style="left:403px;top:168px;width:30px;height:30px;background:#fff;border-radius:4px;border:1.500px solid #bdbab5"></div>
<svg class="abs" style="left:403px;top:168px" width="30" height="30"><circle cx="13.500" cy="12.500" r="3.600" fill="none" stroke="#111" stroke-width="2"/><path d="M16 15.500l4.500 5" stroke="#111" stroke-width="2.600" stroke-linecap="round"/></svg>
<div class="abs" style="left:303.300px;top:396.500px;font-size:10.500px;color:#333;white-space:nowrap;letter-spacing:-.12px;text-shadow:0 0 2px #fff">4.41102354°, -75.26441590°</div>
<div class="abs" style="left:255px;top:411px;width:188px;height:15px;background:rgba(255,255,255,.8);font-size:10.500px;line-height:15px;padding-left:5px;color:#333;white-space:nowrap;letter-spacing:-.12px"><span style="color:#0078a8">Leaflet</span> | © <span style="color:#0078a8">OpenStreetMap</span> contributors</div>

<!--CHART-START-->
<svg class="abs" style="left:0;top:430.700px" width="443" height="271.300" viewBox="0 430.700 443 271.300">
<rect x="0" y="430" width="443" height="272" fill="#03111f"/>
<path d="M0.0 486.1 L3.6 486.3 L7.3 486.6 L10.9 486.8 L14.6 487.0 L18.2 487.3 L21.9 487.5 L25.5 487.7 L29.2 487.8 L32.8 488.0 L36.5 488.1 L40.1 488.2 L43.8 488.3 L47.4 488.3 L51.1 488.3 L54.7 488.3 L58.4 488.3 L62.0 488.2 L65.7 488.1 L69.3 488.0 L73.0 487.9 L76.6 487.8 L80.3 487.6 L83.9 487.4 L87.6 487.2 L91.2 487.0 L94.9 486.7 L98.5 486.5 L102.2 486.2 L105.8 485.9 L109.5 485.7 L113.1 485.4 L116.8 485.1 L120.4 484.9 L124.1 484.6 L127.7 484.3 L131.4 484.1 L135.0 483.8 L138.7 483.6 L142.3 483.4 L146.0 483.2 L149.6 483.0 L153.3 482.8 L156.9 482.7 L160.6 482.5 L164.2 482.4 L167.9 482.3 L171.5 482.3 L175.2 482.2 L178.8 482.2 L182.5 482.2 L186.1 482.2 L189.8 482.2 L193.4 482.3 L197.1 482.3 L200.7 482.4 L204.4 482.5 L208.0 482.6 L211.7 482.8 L215.3 482.9 L219.0 483.1 L222.6 483.2 L226.3 483.4 L229.9 483.5 L233.6 483.7 L237.2 483.8 L240.9 484.0 L244.5 484.1 L248.2 484.2 L251.8 484.4 L255.5 484.5 L259.1 484.6 L262.8 484.6 L266.4 484.7 L270.1 484.7 L273.7 484.8 L277.4 484.8 L281.0 484.8 L284.7 484.7 L288.3 484.7 L292.0 484.6 L295.6 484.6 L299.3 484.5 L302.9 484.4 L306.6 484.3 L310.2 484.2 L313.9 484.0 L317.5 483.9 L321.2 483.8 L324.8 483.6 L328.5 483.5 L332.1 483.4 L335.8 483.2 L339.4 483.1 L343.1 483.0 L346.7 482.9 L350.4 482.8 L354.0 482.7 L357.7 482.7 L361.3 482.6 L364.9 482.6 L368.6 482.6 L372.2 482.6 L375.9 482.6 L379.5 482.6 L383.2 482.7 L386.8 482.8 L390.5 482.9 L394.1 483.0 L397.8 483.1 L401.4 483.3 L405.1 483.5 L408.7 483.7 L412.4 483.9 L416.0 484.1 L419.7 484.3 L423.3 484.6 L427.0 484.8 L430.6 485.1 L434.3 485.3 L437.9 485.6 L441.6 485.9 L441.6 648.2 L437.9 647.9 L434.3 647.6 L430.6 647.4 L427.0 647.1 L423.3 646.9 L419.7 646.6 L416.0 646.3 L412.4 646.1 L408.7 645.9 L405.1 645.6 L401.4 645.4 L397.8 645.2 L394.1 645.0 L390.5 644.9 L386.8 644.8 L383.2 644.7 L379.5 644.6 L375.9 644.5 L372.2 644.5 L368.6 644.5 L364.9 644.5 L361.3 644.5 L357.7 644.6 L354.0 644.7 L350.4 644.9 L346.7 645.0 L343.1 645.2 L339.4 645.4 L335.8 645.6 L332.1 645.8 L328.5 646.1 L324.8 646.3 L321.2 646.6 L317.5 646.9 L313.9 647.2 L310.2 647.5 L306.6 647.8 L302.9 648.1 L299.3 648.4 L295.6 648.7 L292.0 649.0 L288.3 649.3 L284.7 649.6 L281.0 649.8 L277.4 650.1 L273.7 650.3 L270.1 650.5 L266.4 650.7 L262.8 650.9 L259.1 651.1 L255.5 651.2 L251.8 651.3 L248.2 651.4 L244.5 651.5 L240.9 651.5 L237.2 651.6 L233.6 651.6 L229.9 651.6 L226.3 651.5 L222.6 651.5 L219.0 651.4 L215.3 651.3 L211.7 651.2 L208.0 651.1 L204.4 651.0 L200.7 650.8 L197.1 650.7 L193.4 650.5 L189.8 650.4 L186.1 650.2 L182.5 650.0 L178.8 649.9 L175.2 649.7 L171.5 649.6 L167.9 649.4 L164.2 649.3 L160.6 649.2 L156.9 649.1 L153.3 649.0 L149.6 648.9 L146.0 648.9 L142.3 648.8 L138.7 648.8 L135.0 648.8 L131.4 648.8 L127.7 648.8 L124.1 648.8 L120.4 648.9 L116.8 649.0 L113.1 649.0 L109.5 649.1 L105.8 649.2 L102.2 649.3 L98.5 649.4 L94.9 649.5 L91.2 649.6 L87.6 649.7 L83.9 649.8 L80.3 649.9 L76.6 650.0 L73.0 650.0 L69.3 650.1 L65.7 650.2 L62.0 650.2 L58.4 650.2 L54.7 650.2 L51.1 650.2 L47.4 650.2 L43.8 650.2 L40.1 650.1 L36.5 650.0 L32.8 649.9 L29.2 649.8 L25.5 649.7 L21.9 649.6 L18.2 649.4 L14.6 649.2 L10.9 649.0 L7.3 648.8 L3.6 648.6 L0.0 648.3Z" fill="#06336a"/>
<path d="M0.0 491.0 L3.6 491.2 L7.3 491.5 L10.9 491.7 L14.6 491.9 L18.2 492.1 L21.9 492.3 L25.5 492.5 L29.2 492.6 L32.8 492.7 L36.5 492.8 L40.1 492.9 L43.8 492.9 L47.4 493.0 L51.1 493.0 L54.7 493.0 L58.4 492.9 L62.0 492.8 L65.7 492.7 L69.3 492.6 L73.0 492.5 L76.6 492.3 L80.3 492.1 L83.9 491.9 L87.6 491.7 L91.2 491.5 L94.9 491.3 L98.5 491.0 L102.2 490.8 L105.8 490.5 L109.5 490.2 L113.1 490.0 L116.8 489.7 L120.4 489.5 L124.1 489.2 L127.7 489.0 L131.4 488.7 L135.0 488.5 L138.7 488.3 L142.3 488.1 L146.0 487.9 L149.6 487.8 L153.3 487.6 L156.9 487.5 L160.6 487.4 L164.2 487.3 L167.9 487.2 L171.5 487.2 L175.2 487.1 L178.8 487.1 L182.5 487.1 L186.1 487.2 L189.8 487.2 L193.4 487.3 L197.1 487.4 L200.7 487.5 L204.4 487.6 L208.0 487.7 L211.7 487.8 L215.3 487.9 L219.0 488.1 L222.6 488.2 L226.3 488.4 L229.9 488.5 L233.6 488.6 L237.2 488.8 L240.9 488.9 L244.5 489.0 L248.2 489.1 L251.8 489.2 L255.5 489.3 L259.1 489.4 L262.8 489.4 L266.4 489.5 L270.1 489.5 L273.7 489.5 L277.4 489.5 L281.0 489.4 L284.7 489.4 L288.3 489.3 L292.0 489.3 L295.6 489.2 L299.3 489.1 L302.9 489.0 L306.6 488.8 L310.2 488.7 L313.9 488.6 L317.5 488.4 L321.2 488.3 L324.8 488.2 L328.5 488.0 L332.1 487.9 L335.8 487.8 L339.4 487.7 L343.1 487.6 L346.7 487.5 L350.4 487.4 L354.0 487.3 L357.7 487.3 L361.3 487.2 L364.9 487.2 L368.6 487.2 L372.2 487.2 L375.9 487.3 L379.5 487.3 L383.2 487.4 L386.8 487.5 L390.5 487.7 L394.1 487.8 L397.8 488.0 L401.4 488.1 L405.1 488.3 L408.7 488.5 L412.4 488.8 L416.0 489.0 L419.7 489.2 L423.3 489.5 L427.0 489.8 L430.6 490.0 L434.3 490.3 L437.9 490.5 L441.6 490.8 L441.6 643.2 L437.9 643.0 L434.3 642.7 L430.6 642.5 L427.0 642.2 L423.3 641.9 L419.7 641.7 L416.0 641.4 L412.4 641.2 L408.7 641.0 L405.1 640.8 L401.4 640.6 L397.8 640.4 L394.1 640.2 L390.5 640.1 L386.8 640.0 L383.2 639.9 L379.5 639.8 L375.9 639.8 L372.2 639.8 L368.6 639.8 L364.9 639.9 L361.3 639.9 L357.7 640.0 L354.0 640.1 L350.4 640.3 L346.7 640.4 L343.1 640.6 L339.4 640.8 L335.8 641.1 L332.1 641.3 L328.5 641.5 L324.8 641.8 L321.2 642.1 L317.5 642.4 L313.9 642.7 L310.2 643.0 L306.6 643.2 L302.9 643.5 L299.3 643.8 L295.6 644.1 L292.0 644.4 L288.3 644.6 L284.7 644.9 L281.0 645.1 L277.4 645.4 L273.7 645.6 L270.1 645.8 L266.4 646.0 L262.8 646.1 L259.1 646.2 L255.5 646.4 L251.8 646.5 L248.2 646.5 L244.5 646.6 L240.9 646.6 L237.2 646.6 L233.6 646.6 L229.9 646.6 L226.3 646.5 L222.6 646.5 L219.0 646.4 L215.3 646.3 L211.7 646.2 L208.0 646.1 L204.4 645.9 L200.7 645.8 L197.1 645.6 L193.4 645.5 L189.8 645.4 L186.1 645.2 L182.5 645.1 L178.8 644.9 L175.2 644.8 L171.5 644.7 L167.9 644.5 L164.2 644.4 L160.6 644.4 L156.9 644.3 L153.3 644.2 L149.6 644.2 L146.0 644.1 L142.3 644.1 L138.7 644.1 L135.0 644.1 L131.4 644.1 L127.7 644.2 L124.1 644.2 L120.4 644.3 L116.8 644.4 L113.1 644.5 L109.5 644.6 L105.8 644.7 L102.2 644.8 L98.5 644.9 L94.9 645.0 L91.2 645.1 L87.6 645.2 L83.9 645.3 L80.3 645.3 L76.6 645.4 L73.0 645.5 L69.3 645.5 L65.7 645.6 L62.0 645.6 L58.4 645.6 L54.7 645.6 L51.1 645.6 L47.4 645.5 L43.8 645.5 L40.1 645.4 L36.5 645.3 L32.8 645.2 L29.2 645.1 L25.5 644.9 L21.9 644.7 L18.2 644.5 L14.6 644.3 L10.9 644.1 L7.3 643.9 L3.6 643.7 L0.0 643.4Z" fill="#376aa2"/>
<path d="M0.0 495.9 L3.6 496.1 L7.3 496.4 L10.9 496.6 L14.6 496.8 L18.2 497.0 L21.9 497.1 L25.5 497.3 L29.2 497.4 L32.8 497.5 L36.5 497.6 L40.1 497.6 L43.8 497.6 L47.4 497.7 L51.1 497.6 L54.7 497.6 L58.4 497.5 L62.0 497.4 L65.7 497.3 L69.3 497.2 L73.0 497.0 L76.6 496.9 L80.3 496.7 L83.9 496.5 L87.6 496.3 L91.2 496.0 L94.9 495.8 L98.5 495.5 L102.2 495.3 L105.8 495.0 L109.5 494.8 L113.1 494.5 L116.8 494.3 L120.4 494.0 L124.1 493.8 L127.7 493.6 L131.4 493.4 L135.0 493.2 L138.7 493.0 L142.3 492.8 L146.0 492.6 L149.6 492.5 L153.3 492.4 L156.9 492.3 L160.6 492.2 L164.2 492.1 L167.9 492.1 L171.5 492.0 L175.2 492.0 L178.8 492.0 L182.5 492.1 L186.1 492.1 L189.8 492.2 L193.4 492.2 L197.1 492.3 L200.7 492.4 L204.4 492.6 L208.0 492.7 L211.7 492.8 L215.3 492.9 L219.0 493.1 L222.6 493.2 L226.3 493.3 L229.9 493.5 L233.6 493.6 L237.2 493.7 L240.9 493.8 L244.5 493.9 L248.2 494.0 L251.8 494.1 L255.5 494.1 L259.1 494.2 L262.8 494.2 L266.4 494.2 L270.1 494.2 L273.7 494.2 L277.4 494.2 L281.0 494.1 L284.7 494.0 L288.3 494.0 L292.0 493.9 L295.6 493.8 L299.3 493.6 L302.9 493.5 L306.6 493.4 L310.2 493.3 L313.9 493.1 L317.5 493.0 L321.2 492.8 L324.8 492.7 L328.5 492.6 L332.1 492.4 L335.8 492.3 L339.4 492.2 L343.1 492.1 L346.7 492.0 L350.4 492.0 L354.0 491.9 L357.7 491.9 L361.3 491.9 L364.9 491.9 L368.6 491.9 L372.2 491.9 L375.9 492.0 L379.5 492.1 L383.2 492.2 L386.8 492.3 L390.5 492.4 L394.1 492.6 L397.8 492.8 L401.4 493.0 L405.1 493.2 L408.7 493.4 L412.4 493.7 L416.0 493.9 L419.7 494.2 L423.3 494.4 L427.0 494.7 L430.6 494.9 L434.3 495.2 L437.9 495.5 L441.6 495.7 L441.6 638.3 L437.9 638.1 L434.3 637.8 L430.6 637.5 L427.0 637.3 L423.3 637.0 L419.7 636.8 L416.0 636.5 L412.4 636.3 L408.7 636.1 L405.1 635.9 L401.4 635.7 L397.8 635.6 L394.1 635.4 L390.5 635.3 L386.8 635.2 L383.2 635.2 L379.5 635.1 L375.9 635.1 L372.2 635.1 L368.6 635.2 L364.9 635.2 L361.3 635.3 L357.7 635.4 L354.0 635.5 L350.4 635.7 L346.7 635.9 L343.1 636.1 L339.4 636.3 L335.8 636.5 L332.1 636.8 L328.5 637.0 L324.8 637.3 L321.2 637.6 L317.5 637.8 L313.9 638.1 L310.2 638.4 L306.6 638.7 L302.9 639.0 L299.3 639.2 L295.6 639.5 L292.0 639.8 L288.3 640.0 L284.7 640.3 L281.0 640.5 L277.4 640.7 L273.7 640.9 L270.1 641.1 L266.4 641.2 L262.8 641.3 L259.1 641.5 L255.5 641.5 L251.8 641.6 L248.2 641.7 L244.5 641.7 L240.9 641.7 L237.2 641.7 L233.6 641.7 L229.9 641.6 L226.3 641.6 L222.6 641.5 L219.0 641.4 L215.3 641.3 L211.7 641.2 L208.0 641.1 L204.4 640.9 L200.7 640.8 L197.1 640.7 L193.4 640.5 L189.8 640.4 L186.1 640.3 L182.5 640.1 L178.8 640.0 L175.2 639.9 L171.5 639.8 L167.9 639.7 L164.2 639.6 L160.6 639.5 L156.9 639.5 L153.3 639.4 L149.6 639.4 L146.0 639.4 L142.3 639.4 L138.7 639.4 L135.0 639.5 L131.4 639.5 L127.7 639.6 L124.1 639.6 L120.4 639.7 L116.8 639.8 L113.1 639.9 L109.5 640.0 L105.8 640.1 L102.2 640.2 L98.5 640.3 L94.9 640.4 L91.2 640.5 L87.6 640.6 L83.9 640.7 L80.3 640.8 L76.6 640.9 L73.0 640.9 L69.3 641.0 L65.7 641.0 L62.0 641.0 L58.4 641.0 L54.7 641.0 L51.1 640.9 L47.4 640.9 L43.8 640.8 L40.1 640.7 L36.5 640.6 L32.8 640.4 L29.2 640.3 L25.5 640.1 L21.9 639.9 L18.2 639.7 L14.6 639.5 L10.9 639.2 L7.3 639.0 L3.6 638.8 L0.0 638.5Z" fill="#6a9bce"/>
<path d="M0.0 500.1 L3.6 500.4 L7.3 500.6 L10.9 500.8 L14.6 501.0 L18.2 501.1 L21.9 501.3 L25.5 501.4 L29.2 501.5 L32.8 501.6 L36.5 501.7 L40.1 501.7 L43.8 501.7 L47.4 501.7 L51.1 501.7 L54.7 501.6 L58.4 501.5 L62.0 501.4 L65.7 501.3 L69.3 501.1 L73.0 501.0 L76.6 500.8 L80.3 500.6 L83.9 500.4 L87.6 500.2 L91.2 499.9 L94.9 499.7 L98.5 499.4 L102.2 499.2 L105.8 499.0 L109.5 498.7 L113.1 498.5 L116.8 498.2 L120.4 498.0 L124.1 497.8 L127.7 497.5 L131.4 497.3 L135.0 497.2 L138.7 497.0 L142.3 496.8 L146.0 496.7 L149.6 496.6 L153.3 496.4 L156.9 496.4 L160.6 496.3 L164.2 496.2 L167.9 496.2 L171.5 496.2 L175.2 496.2 L178.8 496.2 L182.5 496.3 L186.1 496.3 L189.8 496.4 L193.4 496.5 L197.1 496.6 L200.7 496.7 L204.4 496.8 L208.0 496.9 L211.7 497.1 L215.3 497.2 L219.0 497.3 L222.6 497.4 L226.3 497.6 L229.9 497.7 L233.6 497.8 L237.2 497.9 L240.9 498.0 L244.5 498.1 L248.2 498.2 L251.8 498.2 L255.5 498.2 L259.1 498.3 L262.8 498.3 L266.4 498.3 L270.1 498.3 L273.7 498.2 L277.4 498.2 L281.0 498.1 L284.7 498.0 L288.3 497.9 L292.0 497.8 L295.6 497.7 L299.3 497.6 L302.9 497.5 L306.6 497.3 L310.2 497.2 L313.9 497.0 L317.5 496.9 L321.2 496.7 L324.8 496.6 L328.5 496.5 L332.1 496.3 L335.8 496.2 L339.4 496.1 L343.1 496.0 L346.7 496.0 L350.4 495.9 L354.0 495.9 L357.7 495.8 L361.3 495.8 L364.9 495.9 L368.6 495.9 L372.2 496.0 L375.9 496.0 L379.5 496.1 L383.2 496.3 L386.8 496.4 L390.5 496.6 L394.1 496.8 L397.8 497.0 L401.4 497.2 L405.1 497.4 L408.7 497.6 L412.4 497.9 L416.0 498.1 L419.7 498.4 L423.3 498.7 L427.0 498.9 L430.6 499.2 L434.3 499.5 L437.9 499.7 L441.6 500.0 L441.6 634.1 L437.9 633.8 L434.3 633.5 L430.6 633.3 L427.0 633.0 L423.3 632.8 L419.7 632.5 L416.0 632.3 L412.4 632.1 L408.7 631.9 L405.1 631.7 L401.4 631.5 L397.8 631.4 L394.1 631.3 L390.5 631.2 L386.8 631.1 L383.2 631.1 L379.5 631.0 L375.9 631.1 L372.2 631.1 L368.6 631.1 L364.9 631.2 L361.3 631.3 L357.7 631.4 L354.0 631.6 L350.4 631.7 L346.7 631.9 L343.1 632.1 L339.4 632.4 L335.8 632.6 L332.1 632.8 L328.5 633.1 L324.8 633.4 L321.2 633.6 L317.5 633.9 L313.9 634.2 L310.2 634.5 L306.6 634.8 L302.9 635.0 L299.3 635.3 L295.6 635.6 L292.0 635.8 L288.3 636.0 L284.7 636.3 L281.0 636.5 L277.4 636.7 L273.7 636.8 L270.1 637.0 L266.4 637.1 L262.8 637.2 L259.1 637.3 L255.5 637.4 L251.8 637.5 L248.2 637.5 L244.5 637.5 L240.9 637.5 L237.2 637.5 L233.6 637.5 L229.9 637.4 L226.3 637.3 L222.6 637.2 L219.0 637.1 L215.3 637.0 L211.7 636.9 L208.0 636.8 L204.4 636.7 L200.7 636.5 L197.1 636.4 L193.4 636.3 L189.8 636.2 L186.1 636.0 L182.5 635.9 L178.8 635.8 L175.2 635.7 L171.5 635.6 L167.9 635.5 L164.2 635.5 L160.6 635.4 L156.9 635.4 L153.3 635.4 L149.6 635.4 L146.0 635.4 L142.3 635.4 L138.7 635.4 L135.0 635.5 L131.4 635.5 L127.7 635.6 L124.1 635.7 L120.4 635.8 L116.8 635.9 L113.1 636.0 L109.5 636.1 L105.8 636.2 L102.2 636.3 L98.5 636.4 L94.9 636.5 L91.2 636.6 L87.6 636.7 L83.9 636.8 L80.3 636.9 L76.6 636.9 L73.0 637.0 L69.3 637.0 L65.7 637.0 L62.0 637.0 L58.4 637.0 L54.7 637.0 L51.1 636.9 L47.4 636.8 L43.8 636.7 L40.1 636.6 L36.5 636.5 L32.8 636.3 L29.2 636.1 L25.5 635.9 L21.9 635.7 L18.2 635.5 L14.6 635.3 L10.9 635.0 L7.3 634.8 L3.6 634.5 L0.0 634.3Z" fill="#b9d2fa"/>
<path d="M0 442.1H443M0 453.4H443M0 464.7H443M0 476.0H443M0 487.3H443M0 498.6H443M0 509.9H443M0 521.2H443M0 532.5H443M0 543.8H443M0 555.1H443M0 566.4H443M0 577.7H443M0 589.0H443M0 600.3H443M0 611.6H443M0 622.9H443M0 634.2H443M0 645.5H443M0 656.8H443M0 668.1H443M0 679.4H443M0 690.7H443" stroke="#8fa6c4" stroke-width=".8" opacity=".32" fill="none"/>
<path d="M37.7 430V702M71.8 430V702M109.5 430V702M146.0 430V702M183.7 430V702M220.2 430V702M257.9 430V702M295.6 430V702M332.1 430V702M369.8 430V702M406.3 430V702" stroke="#9fb2cc" stroke-width=".9" opacity=".4" fill="none"/>
<path d="M0 566.4H443" stroke="#4a5568" stroke-width="1" stroke-dasharray="1.500 2.500" fill="none"/>
<path d="M327.5 430V702" stroke="#3a4a60" stroke-width="1" stroke-dasharray="3.500 3" fill="none"/>
<path d="M0 505.2H443" stroke="#b8305c" stroke-width="1.600" stroke-dasharray="3 3.500" fill="none"/>
<circle cx="327.5" cy="496.5" r="2.100" fill="#fff" stroke="#e01828" stroke-width="1.100"/>
<circle cx="327.5" cy="633.1" r="2.100" fill="#fff" stroke="#e01828" stroke-width="1.100"/>
<circle cx="327.5" cy="505.2" r="3.700" fill="#e30f1b"/>
<text x="323.500" y="505.9" font-size="9.300" fill="#e01828" text-anchor="end" font-family="Liberation Sans, sans-serif">05:49</text>
<text x="324" y="630" font-size="9.300" fill="#e22a20" text-anchor="end" font-family="Liberation Sans, sans-serif">17:54</text>
<text x="4.500" y="439.1" font-size="9" fill="#bcc4cc" font-family="Liberation Sans, sans-serif">00</text>
<text x="4.500" y="450.4" font-size="9" fill="#bcc4cc" font-family="Liberation Sans, sans-serif">01</text>
<text x="4.500" y="461.7" font-size="9" fill="#bcc4cc" font-family="Liberation Sans, sans-serif">02</text>
<text x="4.500" y="473.0" font-size="9" fill="#bcc4cc" font-family="Liberation Sans, sans-serif">03</text>
<text x="4.500" y="484.3" font-size="9" fill="#bcc4cc" font-family="Liberation Sans, sans-serif">04</text>
<text x="4.500" y="495.6" font-size="9" fill="#aeb9c8" font-family="Liberation Sans, sans-serif">05</text>
<text x="4.500" y="506.9" font-size="9" fill="#9aa7bd" font-family="Liberation Sans, sans-serif">06</text>
<text x="4.500" y="518.2" font-size="9" fill="#9aa7bd" font-family="Liberation Sans, sans-serif">07</text>
<text x="4.500" y="529.5" font-size="9" fill="#9aa7bd" font-family="Liberation Sans, sans-serif">08</text>
<text x="4.500" y="540.8" font-size="9" fill="#9aa7bd" font-family="Liberation Sans, sans-serif">09</text>
<text x="4.500" y="552.1" font-size="9" fill="#9aa7bd" font-family="Liberation Sans, sans-serif">10</text>
<text x="4.500" y="563.4" font-size="9" fill="#9aa7bd" font-family="Liberation Sans, sans-serif">11</text>
<text x="4.500" y="574.7" font-size="9" fill="#9aa7bd" font-family="Liberation Sans, sans-serif">12</text>
<text x="4.500" y="586.0" font-size="9" fill="#9aa7bd" font-family="Liberation Sans, sans-serif">13</text>
<text x="4.500" y="597.3" font-size="9" fill="#9aa7bd" font-family="Liberation Sans, sans-serif">14</text>
<text x="4.500" y="608.6" font-size="9" fill="#9aa7bd" font-family="Liberation Sans, sans-serif">15</text>
<text x="4.500" y="619.9" font-size="9" fill="#9aa7bd" font-family="Liberation Sans, sans-serif">16</text>
<text x="4.500" y="631.2" font-size="9" fill="#9aa7bd" font-family="Liberation Sans, sans-serif">17</text>
<text x="4.500" y="642.5" font-size="9" fill="#aeb9c8" font-family="Liberation Sans, sans-serif">18</text>
<text x="4.500" y="653.8" font-size="9" fill="#bcc4cc" font-family="Liberation Sans, sans-serif">19</text>
<text x="4.500" y="665.1" font-size="9" fill="#bcc4cc" font-family="Liberation Sans, sans-serif">20</text>
<text x="4.500" y="676.4" font-size="9" fill="#bcc4cc" font-family="Liberation Sans, sans-serif">21</text>
<text x="4.500" y="687.7" font-size="9" fill="#bcc4cc" font-family="Liberation Sans, sans-serif">22</text>
<text x="4.500" y="699.0" font-size="9" fill="#bcc4cc" font-family="Liberation Sans, sans-serif">23</text>
<text x="55.0" y="695.500" font-size="9.300" fill="#a9b7c7" text-anchor="middle" font-family="Liberation Sans, sans-serif">Feb</text>
<text x="91.0" y="695.500" font-size="9.300" fill="#a9b7c7" text-anchor="middle" font-family="Liberation Sans, sans-serif">Mar</text>
<text x="127.5" y="695.500" font-size="9.300" fill="#a9b7c7" text-anchor="middle" font-family="Liberation Sans, sans-serif">Apr</text>
<text x="165.5" y="695.500" font-size="9.300" fill="#a9b7c7" text-anchor="middle" font-family="Liberation Sans, sans-serif">May</text>
<text x="202.5" y="695.500" font-size="9.300" fill="#a9b7c7" text-anchor="middle" font-family="Liberation Sans, sans-serif">Jun</text>
<text x="240.0" y="695.500" font-size="9.300" fill="#a9b7c7" text-anchor="middle" font-family="Liberation Sans, sans-serif">Jul</text>
<text x="277.5" y="695.500" font-size="9.300" fill="#a9b7c7" text-anchor="middle" font-family="Liberation Sans, sans-serif">Aug</text>
<text x="314.0" y="695.500" font-size="9.300" fill="#a9b7c7" text-anchor="middle" font-family="Liberation Sans, sans-serif">Sep</text>
<text x="352.0" y="695.500" font-size="9.300" fill="#a9b7c7" text-anchor="middle" font-family="Liberation Sans, sans-serif">Oct</text>
<text x="388.3" y="695.500" font-size="9.300" fill="#a9b7c7" text-anchor="middle" font-family="Liberation Sans, sans-serif">Nov</text>
<text x="425.0" y="695.500" font-size="9.300" fill="#a9b7c7" text-anchor="middle" font-family="Liberation Sans, sans-serif">Dec</text>
</svg>
<div class="abs" style="left:335.500px;top:435px;width:103px;height:28.500px;border-radius:4px;background:#d9dcdf;border:1px solid #c2c5c9"></div>
<div class="abs" style="left:345.500px;top:442.500px;font-size:11.500px;color:#333;white-space:nowrap;letter-spacing:-.1px;-webkit-text-stroke:.3px #333">DAY-LENGTH</div>
<svg class="abs" style="left:420px;top:445px" width="10" height="8"><path d="M1 2h7l-3.500 3.800z" fill="#333"/></svg>
<!--CHART-END-->
<!--VIEW3D-START-->
<svg class="abs" style="left:448px;top:158px" width="832" height="543.700" viewBox="448 158 832 543.700">
<rect x="447" y="158" width="834" height="545" fill="#b9d3f6"/>
<defs><linearGradient id="gg" x1="0" y1="0" x2=".25" y2="1"><stop offset="0" stop-color="#a5bfeb"/><stop offset=".5" stop-color="#adc9f1"/><stop offset="1" stop-color="#bad4f7"/></linearGradient></defs>
<path d="M447 168.6 L1281 138.5 L1281 703 L447 703Z" fill="url(#gg)"/>
<clipPath id="gclip"><path d="M447 168.6 L1281 138.5 L1281 703 L447 703Z"/></clipPath>
<g clip-path="url(#gclip)" fill="none">
<path d="M447 173.43L1281 143.32M447 178.30L1281 148.12M447 183.18L1281 152.92M447 188.05L1281 157.72M447 192.93L1281 162.52M447 202.68L1281 172.11M447 207.55L1281 176.91M447 212.43L1281 181.71M447 217.30L1281 186.51M447 222.18L1281 191.30M447 231.93L1281 200.90M447 236.80L1281 205.70M447 241.68L1281 210.50M447 246.55L1281 215.29M447 251.43L1281 220.09M447 261.18L1281 229.69M447 266.05L1281 234.48M447 270.93L1281 239.28M447 275.80L1281 244.08M447 280.68L1281 248.88M447 290.43L1281 258.47M447 295.30L1281 263.27M447 300.18L1281 268.07M447 305.05L1281 272.87M447 309.93L1281 277.67M447 319.68L1281 287.26M447 324.55L1281 292.06M447 329.43L1281 296.86M447 334.30L1281 301.66M447 339.18L1281 306.45M447 348.93L1281 316.05M447 353.81L1281 320.85M447 358.68L1281 325.64M447 363.56L1281 330.44M447 368.43L1281 335.24M447 378.18L1281 344.84M447 383.06L1281 349.63M447 387.93L1281 354.43M447 392.81L1281 359.23M447 397.68L1281 364.03M447 407.43L1281 373.62M447 412.31L1281 378.42M447 417.18L1281 383.22M447 422.06L1281 388.02M447 426.93L1281 392.82M447 436.68L1281 402.41M447 441.56L1281 407.21M447 446.43L1281 412.01M447 451.31L1281 416.81M447 456.18L1281 421.60M447 465.93L1281 431.20M447 470.81L1281 436.00M447 475.68L1281 440.79M447 480.56L1281 445.59M447 485.43L1281 450.39M447 495.18L1281 459.99M447 500.06L1281 464.78M447 504.93L1281 469.58M447 509.81L1281 474.38M447 514.68L1281 479.18M447 524.43L1281 488.77M447 529.31L1281 493.57M447 534.19L1281 498.37M447 539.06L1281 503.17M447 543.94L1281 507.97M447 553.69L1281 517.56M447 558.56L1281 522.36M447 563.44L1281 527.16M447 568.31L1281 531.95M447 573.19L1281 536.75M447 582.94L1281 546.35M447 587.81L1281 551.15M447 592.69L1281 555.94M447 597.56L1281 560.74M447 602.44L1281 565.54M447 612.19L1281 575.14M447 617.06L1281 579.93M447 621.94L1281 584.73M447 626.81L1281 589.53M447 631.69L1281 594.33M447 641.44L1281 603.92M447 646.31L1281 608.72M447 651.19L1281 613.52M447 656.06L1281 618.32M447 660.94L1281 623.12M447 670.69L1281 632.71M447 675.56L1281 637.51M447 680.44L1281 642.31M447 685.31L1281 647.10M447 690.19L1281 651.90M447 699.94L1281 661.50M447 704.81L1281 666.30M447 709.69L1281 671.09M447 714.56L1281 675.89M447 719.44L1281 680.69M447 729.19L1281 690.29M447 734.07L1281 695.08M447 738.94L1281 699.88" stroke="#86a4d4" stroke-width=".9" opacity=".6"/>
<path d="M-157.38 150L469.61 703M-99.38 150L527.61 703M-70.38 150L556.61 703M-41.38 150L585.61 703M-12.38 150L614.61 703M45.62 150L672.61 703M74.62 150L701.61 703M103.62 150L730.61 703M132.62 150L759.61 703M190.62 150L817.61 703M219.62 150L846.61 703M248.62 150L875.61 703M277.62 150L904.61 703M335.62 150L962.61 703M364.62 150L991.61 703M393.62 150L1020.61 703M422.62 150L1049.61 703M480.62 150L1107.61 703M509.62 150L1136.61 703M538.62 150L1165.61 703M567.62 150L1194.61 703M625.62 150L1252.61 703M654.62 150L1281.61 703M683.62 150L1310.61 703M712.62 150L1339.61 703M770.62 150L1397.61 703M799.62 150L1426.61 703M828.62 150L1455.61 703M857.62 150L1484.61 703M915.62 150L1542.61 703M944.62 150L1571.61 703M973.62 150L1600.61 703M1002.62 150L1629.61 703M1060.62 150L1687.61 703M1089.62 150L1716.61 703M1118.62 150L1745.61 703M1147.62 150L1774.61 703M1205.62 150L1832.61 703M1234.62 150L1861.61 703M1263.62 150L1890.61 703" stroke="#86a4d4" stroke-width=".9" opacity=".7"/>
<path d="M447 168.55L1281 138.53M447 197.80L1281 167.31M447 227.05L1281 196.10M447 256.30L1281 224.89M447 285.55L1281 253.68M447 314.80L1281 282.46M447 344.06L1281 311.25M447 373.31L1281 340.04M447 402.56L1281 368.83M447 431.81L1281 397.61M447 461.06L1281 426.40M447 490.31L1281 455.19M447 519.56L1281 483.98M447 548.81L1281 512.76M447 578.06L1281 541.55M447 607.31L1281 570.34M447 636.56L1281 599.13M447 665.81L1281 627.91M447 695.06L1281 656.70M447 724.32L1281 685.49" stroke="#5a80b8" stroke-width="1.25" opacity=".85"/>
<path d="M-128.38 150L498.61 703M16.62 150L643.61 703M161.62 150L788.61 703M306.62 150L933.61 703M451.62 150L1078.61 703M596.62 150L1223.61 703M741.62 150L1368.61 703M886.62 150L1513.61 703M1031.62 150L1658.61 703M1176.62 150L1803.61 703" stroke="#557bb4" stroke-width="1.35" opacity=".9"/>
</g>
<path d="M987.8 478.5L1281 469.2L1281 516.5L958.6 525.5L951 500Z" fill="#1c2a44" opacity=".34"/>
<path d="M498.3 499.6L1183.3 472.2" stroke="#696d74" stroke-width="1.4"/>
<path d="M759.7 418.1L913.9 554.1" stroke="#696d74" stroke-width="1.4"/>
<g transform="rotate(0.25 836.8 486.1)">
<ellipse cx="836.8" cy="486.1" rx="348.5" ry="69.7" fill="none" stroke="#63666b" stroke-width="2.5"/>
<ellipse cx="836.8" cy="486.1" rx="351.3" ry="71.4" fill="none" stroke="#54575c" stroke-width="3" stroke-dasharray="1 4.4" opacity=".8"/>
<ellipse cx="836.8" cy="486.1" rx="348.5" ry="69.7" fill="none" stroke="#aeb8c6" stroke-width=".8" opacity=".85"/>
</g>
<g font-family="Liberation Sans, sans-serif" font-size="5.500" font-style="italic" fill="#3c3f44" text-anchor="middle" opacity=".85"><text x="916.9" y="562.9" transform="rotate(10 916.9 562.9)">N</text><text x="822.9" y="564.7" transform="rotate(-12 822.9 564.7)">15</text><text x="729.9" y="561.4" transform="rotate(-12 729.9 561.4)">30</text><text x="644.2" y="553.0" transform="rotate(-12 644.2 553.0)">45</text><text x="571.6" y="540.2" transform="rotate(-12 571.6 540.2)">60</text><text x="517.0" y="523.9" transform="rotate(-12 517.0 523.9)">75</text><text x="484.3" y="505.1" transform="rotate(-12 484.3 505.1)">E</text><text x="475.6" y="485.2" transform="rotate(-12 475.6 485.2)">105</text><text x="491.5" y="465.4" transform="rotate(-12 491.5 465.4)">120</text><text x="530.9" y="447.2" transform="rotate(-12 530.9 447.2)">135</text><text x="591.2" y="431.8" transform="rotate(-12 591.2 431.8)">150</text><text x="668.2" y="420.3" transform="rotate(-12 668.2 420.3)">165</text><text x="756.7" y="413.3" transform="rotate(-12 756.7 413.3)">S</text><text x="850.7" y="411.5" transform="rotate(10 850.7 411.5)">195</text><text x="943.7" y="414.8" transform="rotate(10 943.7 414.8)">210</text><text x="1029.4" y="423.2" transform="rotate(10 1029.4 423.2)">225</text><text x="1102.0" y="436.0" transform="rotate(10 1102.0 436.0)">240</text><text x="1156.6" y="452.3" transform="rotate(10 1156.6 452.3)">255</text><text x="1189.3" y="471.1" transform="rotate(10 1189.3 471.1)">W</text><text x="1198.0" y="491.0" transform="rotate(10 1198.0 491.0)">285</text><text x="1182.1" y="510.8" transform="rotate(10 1182.1 510.8)">300</text><text x="1142.7" y="529.0" transform="rotate(10 1142.7 529.0)">315</text><text x="1082.4" y="544.4" transform="rotate(10 1082.4 544.4)">330</text><text x="1005.4" y="555.9" transform="rotate(10 1005.4 555.9)">345</text></g>
<path d="M495.7 476.0 L495.8 474.5 L495.9 473.0 L496.0 471.5 L496.1 470.0 L496.2 468.5 L496.3 467.0 L496.4 465.5 L496.5 464.1 L496.7 462.6 L496.8 461.1 L497.0 459.6 L497.1 458.1 L497.3 456.6 L497.4 455.1 L497.6 453.7 L497.8 452.2 L498.0 450.7 L498.2 449.2 L498.4 447.7 L498.6 446.2 L498.8 444.8 L499.0 443.3 L499.2 441.8 L499.5 440.3 L499.7 438.9 L499.9 437.4 L500.2 435.9 L500.4 434.4 L500.7 433.0 L501.0 431.5 L501.3 430.0 L501.5 428.5 L501.8 427.1 L502.1 425.6 L502.4 424.1 L502.7 422.7 L503.0 421.2 L503.4 419.8 L503.7 418.3 L504.0 416.8 L504.4 415.4 L504.7 413.9 L505.1 412.5 L505.4 411.0 L505.8 409.6 L506.2 408.1 L506.5 406.7 L506.9 405.2 L507.3 403.8 L507.7 402.3 L508.1 400.9 L508.5 399.5 L508.9 398.0 L509.3 396.6 L509.8 395.1 L510.2 393.7 L510.6 392.3 L511.1 390.8 L511.5 389.4 L512.0 388.0 L512.5 386.6 L512.9 385.1 L513.4 383.7 L513.9 382.3 L514.4 380.9 L514.9 379.5 L515.4 378.1 L515.9 376.7 L516.4 375.3 L516.9 373.8 L517.4 372.4 L518.0 371.0 L518.5 369.6 L519.1 368.2 L519.6 366.9 L520.2 365.5 L520.7 364.1 L521.3 362.7 L521.9 361.3 L522.4 359.9 L523.0 358.5 L523.6 357.2 L524.2 355.8 L524.8 354.4 L525.4 353.0 L526.0 351.7 L526.7 350.3 L527.3 348.9 L527.9 347.6 L528.6 346.2 L529.2 344.9 L529.8 343.5 L530.5 342.2 L531.2 340.8 L531.8 339.5 L532.5 338.2 L533.2 336.8 L533.9 335.5 L534.6 334.1 L535.3 332.8 L536.0 331.5 L536.7 330.2 L537.4 328.9 L538.1 327.5 L538.8 326.2 L539.6 324.9 L540.3 323.6 L541.0 322.3 L541.8 321.0 L542.5 319.7 L543.3 318.4 L544.1 317.1 L544.8 315.8 L545.6 314.6 L546.4 313.3 L547.2 312.0 L548.0 310.7 L548.8 309.4 L549.6 308.2 L550.4 306.9 L551.2 305.7 L552.0 304.4 L552.8 303.1 L553.6 301.9 L554.5 300.6 L555.3 299.4 L556.2 298.2 L557.0 296.9 L557.9 295.7 L558.7 294.5 L559.6 293.2 L560.5 292.0 L561.4 290.8 L562.2 289.6 L563.1 288.4 L564.0 287.2 L564.9 286.0 L565.8 284.8 L566.7 283.6 L567.6 282.4 L568.6 281.2 L569.5 280.0 L570.4 278.9 L571.3 277.7 L572.3 276.5 L573.2 275.3 L574.2 274.2 L575.1 273.0 L576.1 271.9 L577.1 270.7 L578.0 269.6 L579.0 268.4 L580.0 267.3 L581.0 266.2 L581.9 265.0 L582.9 263.9 L583.9 262.8 L584.9 261.7 L585.9 260.6 L587.0 259.5 L588.0 258.4 L589.0 257.3 L590.0 256.2 L591.0 255.1 L592.1 254.0 L593.1 252.9 L594.2 251.8 L595.2 250.8 L596.3 249.7 L597.3 248.6 L598.4 247.6 L599.5 246.5 L600.5 245.5 L601.6 244.4 L602.7 243.4 L603.8 242.4 L604.9 241.3 L606.0 240.3 L607.1 239.3 L608.2 238.3 L609.3 237.2 L610.4 236.2 L611.5 235.2 L612.6 234.2 L613.7 233.3 L614.9 232.3 L616.0 231.3 L617.1 230.3 L618.3 229.3 L619.4 228.4 L620.6 227.4 L621.7 226.4 L622.9 225.5 L624.0 224.6 L625.2 223.6 L626.4 222.7 L627.6 221.7 L628.7 220.8 L629.9 219.9 L631.1 219.0 L632.3 218.1 L633.5 217.2 L634.7 216.3 L635.9 215.4 L637.1 214.5 L638.3 213.6 L639.5 212.7 L640.7 211.8 L641.9 211.0 L643.2 210.1 L644.4 209.2 L645.6 208.4 L646.8 207.5 L648.1 206.7 L649.3 205.9 L650.6 205.0 L651.8 204.2 L653.1 203.4 L654.3 202.6 L655.6 201.7 L656.8 200.9 L658.1 200.1 L659.4 199.3 L660.7 198.6 L661.9 197.8 L663.2 197.0 L664.5 196.2 L665.8 195.5 L667.1 194.7 L668.4 193.9 L669.7 193.2 L671.0 192.5 L672.3 191.7 L673.6 191.0 L674.9 190.3 L676.2 189.5 L677.5 188.8 L678.8 188.1 L680.1 187.4 L681.4 186.7 L682.8 186.0 L684.1 185.3 L685.4 184.6 L686.8 184.0 L688.1 183.3 L689.4 182.6 L690.8 182.0 L692.1 181.3 L693.5 180.7 L694.8 180.0 L696.2 179.4 L697.5 178.8 L698.9 178.2 L700.3 177.5 L701.6 176.9 L703.0 176.3 L704.4 175.7 L705.7 175.1 L707.1 174.5 L708.5 174.0 L709.9 173.4 L711.2 172.8 L712.6 172.3 L714.0 171.7 L715.4 171.2 L716.8 170.6 L718.2 170.1 L719.6 169.5 L721.0 169.0 L722.4 168.5 L723.8 168.0 L725.2 167.5 L726.6 167.0 L728.0 166.5 L729.4 166.0 L730.8 165.5 L732.2 165.0 L733.6 164.6 L735.1 164.1 L736.5 163.6 L737.9 163.2 L739.3 162.7 L740.8 162.3 L742.2 161.9 L743.6 161.4 L745.0 161.0 L746.5 160.6 L747.9 160.2 L749.3 159.8 L750.8 159.4 L752.2 159.0 L753.7 158.6 L755.1 158.2 L756.5 157.9 L758.0 157.5 L759.4 157.1 L760.9 156.8 L762.3 156.4 L763.8 156.1 L765.2 155.8 L766.7 155.4 L768.1 155.1 L769.6 154.8 L771.1 154.5 L772.5 154.2 L774.0 153.9 L775.4 153.6 L776.9 153.3 L778.4 153.1 L779.8 152.8 L781.3 152.5 L782.8 152.3 L784.2 152.0 L785.7 151.8 L787.2 151.5 L788.6 151.3 L790.1 151.1 L791.6 150.9 L793.0 150.6 L794.5 150.4 L796.0 150.2 L797.5 150.0 L798.9 150.0 L800.4 150.0 L801.9 150.0 L803.4 150.0 L804.9 150.0 L806.3 150.0 L807.8 150.0 L809.3 150.0 L810.8 150.0 L812.3 150.0 L813.7 150.0 L815.2 150.0 L816.7 150.0 L818.2 150.0 L819.7 150.0 L821.2 150.0 L822.6 150.0 L824.1 150.0 L825.6 150.0 L827.1 150.0 L828.6 150.0 L830.1 150.0 L831.5 150.0 L833.0 150.0 L834.5 150.0 L836.0 150.0 L837.5 150.0 L839.0 150.0 L840.5 150.0 L841.9 150.0 L843.4 150.0 L844.9 150.0 L846.4 150.0 L847.9 150.0 L849.4 150.0 L850.8 150.0 L852.3 150.0 L853.8 150.0 L855.3 150.0 L856.8 150.0 L858.3 150.0 L859.7 150.0 L861.2 150.0 L862.7 150.0 L864.2 150.0 L865.7 150.0 L867.1 150.0 L868.6 150.0 L870.1 150.0 L871.6 150.0 L873.0 150.0 L874.5 150.0 L876.0 150.0 L877.5 150.0 L878.9 150.0 L880.4 150.0 L881.9 150.0 L883.4 150.0 L884.8 150.2 L886.3 150.4 L887.8 150.6 L889.2 150.8 L890.7 151.0 L892.2 151.2 L893.6 151.5 L895.1 151.7 L896.5 151.9 L898.0 152.2 L899.5 152.5 L900.9 152.7 L902.4 153.0 L903.8 153.3 L905.3 153.5 L906.7 153.8 L908.2 154.1 L909.6 154.4 L911.1 154.7 L912.5 155.0 L914.0 155.4 L915.4 155.7 L916.9 156.0 L918.3 156.3 L919.8 156.7 L921.2 157.0 L922.6 157.4 L924.1 157.8 L925.5 158.1 L926.9 158.5 L928.4 158.9 L929.8 159.3 L931.2 159.7 L932.6 160.1 L934.1 160.5 L935.5 160.9 L936.9 161.3 L938.3 161.7 L939.7 162.2 L941.1 162.6 L942.5 163.1 L944.0 163.5 L945.4 164.0 L946.8 164.4 L948.2 164.9 L949.6 165.4 L951.0 165.9 L952.4 166.3 L953.8 166.8 L955.1 167.3 L956.5 167.8 L957.9 168.4 L959.3 168.9 L960.7 169.4 L962.1 169.9 L963.4 170.5 L964.8 171.0 L966.2 171.6 L967.6 172.1 L968.9 172.7 L970.3 173.2 L971.7 173.8 L973.0 174.4 L974.4 175.0 L975.7 175.6 L977.1 176.2 L978.4 176.8 L979.8 177.4 L981.1 178.0 L982.5 178.6 L983.8 179.2 L985.1 179.9 L986.5 180.5 L987.8 181.2 L989.1 181.8 L990.4 182.5 L991.8 183.1 L993.1 183.8 L994.4 184.5 L995.7 185.1 L997.0 185.8 L998.3 186.5 L999.6 187.2 L1000.9 187.9 L1002.2 188.6 L1003.5 189.3 L1004.8 190.1 L1006.1 190.8 L1007.4 191.5 L1008.7 192.3 L1009.9 193.0 L1011.2 193.8 L1012.5 194.5 L1013.7 195.3 L1015.0 196.0 L1016.3 196.8 L1017.5 197.6 L1018.8 198.4 L1020.0 199.1 L1021.3 199.9 L1022.5 200.7 L1023.7 201.5 L1025.0 202.3 L1026.2 203.2 L1027.4 204.0 L1028.7 204.8 L1029.9 205.6 L1031.1 206.5 L1032.3 207.3 L1033.5 208.2 L1034.7 209.0 L1035.9 209.9 L1037.1 210.7 L1038.3 211.6 L1039.5 212.5 L1040.7 213.4 L1041.9 214.2 L1043.1 215.1 L1044.2 216.0 L1045.4 216.9 L1046.6 217.8 L1047.7 218.7 L1048.9 219.7 L1050.1 220.6 L1051.2 221.5 L1052.4 222.4 L1053.5 223.4 L1054.6 224.3 L1055.8 225.3 L1056.9 226.2 L1058.0 227.2 L1059.1 228.1 L1060.3 229.1 L1061.4 230.1 L1062.5 231.0 L1063.6 232.0 L1064.7 233.0 L1065.8 234.0 L1066.9 235.0 L1068.0 236.0 L1069.0 237.0 L1070.1 238.0 L1071.2 239.0 L1072.3 240.0 L1073.3 241.1 L1074.4 242.1 L1075.4 243.1 L1076.5 244.2 L1077.5 245.2 L1078.6 246.2 L1079.6 247.3 L1080.6 248.4 L1081.7 249.4 L1082.7 250.5 L1083.7 251.6 L1084.7 252.6 L1085.7 253.7 L1086.7 254.8 L1087.7 255.9 L1088.7 257.0 L1089.7 258.1 L1090.7 259.2 L1091.7 260.3 L1092.7 261.4 L1093.6 262.5 L1094.6 263.6 L1095.6 264.7 L1096.5 265.9 L1097.5 267.0 L1098.4 268.1 L1099.4 269.3 L1100.3 270.4 L1101.2 271.6 L1102.1 272.7 L1103.1 273.9 L1104.0 275.0 L1104.9 276.2 L1105.8 277.4 L1106.7 278.5 L1107.6 279.7 L1108.5 280.9 L1109.4 282.1 L1110.2 283.3 L1111.1 284.5 L1112.0 285.7 L1112.8 286.9 L1113.7 288.1 L1114.6 289.3 L1115.4 290.5 L1116.2 291.7 L1117.1 292.9 L1117.9 294.2 L1118.7 295.4 L1119.6 296.6 L1120.4 297.8 L1121.2 299.1 L1122.0 300.3 L1122.8 301.6 L1123.6 302.8 L1124.4 304.1 L1125.1 305.3 L1125.9 306.6 L1126.7 307.9 L1127.5 309.1 L1128.2 310.4 L1129.0 311.7 L1129.7 312.9 L1130.5 314.2 L1131.2 315.5 L1131.9 316.8 L1132.7 318.1 L1133.4 319.4 L1134.1 320.7 L1134.8 322.0 L1135.5 323.3 L1136.2 324.6 L1136.9 325.9 L1137.6 327.2 L1138.3 328.5 L1138.9 329.8 L1139.6 331.2 L1140.3 332.5 L1140.9 333.8 L1141.6 335.1 L1142.2 336.5 L1142.9 337.8 L1143.5 339.1 L1144.1 340.5 L1144.8 341.8 L1145.4 343.2 L1146.0 344.5 L1146.6 345.9 L1147.2 347.2 L1147.8 348.6 L1148.4 350.0 L1149.0 351.3 L1149.5 352.7 L1150.1 354.1 L1150.7 355.4 L1151.2 356.8 L1151.8 358.2 L1152.3 359.6 L1152.9 360.9 L1153.4 362.3 L1153.9 363.7 L1154.4 365.1 L1155.0 366.5 L1155.5 367.9 L1156.0 369.3 L1156.5 370.7 L1156.9 372.1 L1157.4 373.5 L1157.9 374.9 L1158.4 376.3 L1158.8 377.7 L1159.3 379.1 L1159.8 380.5 L1160.2 381.9 L1160.7 383.4 L1161.1 384.8 L1161.5 386.2 L1161.9 387.6 L1162.4 389.1 L1162.8 390.5 L1163.2 391.9 L1163.6 393.3 L1164.0 394.8 L1164.3 396.2 L1164.7 397.6 L1165.1 399.1 L1165.5 400.5 L1165.8 402.0 L1166.2 403.4 L1166.5 404.9 L1166.9 406.3 L1167.2 407.7 L1167.5 409.2 L1167.9 410.6 L1168.2 412.1 L1168.5 413.6 L1168.8 415.0 L1169.1 416.5 L1169.4 417.9 L1169.7 419.4 L1169.9 420.8 L1170.2 422.3 L1170.5 423.8 L1170.7 425.2 L1171.0 426.7 L1171.2 428.2 L1171.5 429.6 L1171.7 431.1 L1171.9 432.6 L1172.1 434.1 L1172.4 435.5 L1172.6 437.0 L1172.8 438.5 L1173.0 439.9 L1173.2 441.4 L1173.3 442.9 L1173.5 444.4 L1173.7 445.9 L1173.8 447.3 L1174.0 448.8 L1174.1 450.3 L1174.3 451.8 L1174.4 453.3 L1174.6 454.8 L1174.7 456.2 L1174.8 457.7 L1174.9 459.2 L1175.0 460.7 L1175.1 462.2 L1175.2 463.7 L1175.3 465.2 L1175.4 466.6 L1175.4 468.1 L1175.5 469.6 L1175.6 471.1 L1175.6 472.6 L1175.7 474.1 L1175.7 475.6 L1175.7 477.1 L1175.8 478.6 L1175.8 480.1 L1175.8 481.5 L1175.8 483.0 L1175.8 484.5 L1175.8 486.0 L1175.8 487.5 L1175.8 489.0 L1175.8 490.5 L1175.7 492.0 L1175.7 493.5 L1175.6 495.0 L1175.6 496.5 L1175.5 498.0 L1180.1 498.1 L1181.3 496.7 L1182.3 495.2 L1183.2 493.7 L1183.9 492.3 L1184.5 490.8 L1184.9 489.3 L1185.2 487.8 L1185.3 486.3 L1185.2 484.9 L1185.0 483.4 L1184.7 481.9 L1184.1 480.4 L1183.5 479.0 L1182.6 477.5 L1181.6 476.0 L1180.5 474.6 L1179.2 473.1 L1177.7 471.7 L1176.1 470.2 L1174.4 468.8 L1172.5 467.4 L1170.4 465.9 L1168.2 464.5 L1165.8 463.1 L1163.3 461.7 L1160.6 460.3 L1157.8 459.0 L1154.9 457.6 L1151.8 456.3 L1148.6 455.0 L1145.2 453.6 L1141.7 452.3 L1138.0 451.0 L1134.2 449.8 L1130.3 448.5 L1126.3 447.3 L1122.1 446.1 L1117.8 444.9 L1113.3 443.7 L1108.8 442.5 L1112.0 442.0 C1111.7 440.2 1110.7 435.5 1110.0 431.0 C1109.3 426.5 1109.2 422.7 1108.0 415.0 C1106.8 407.3 1105.2 395.8 1103.0 385.0 C1100.8 374.2 1097.8 359.3 1095.0 350.0 C1092.2 340.7 1089.7 335.5 1086.0 329.0 C1082.3 322.5 1076.5 316.3 1073.0 311.0 C1069.5 305.7 1068.6 302.5 1065.0 297.3 C1061.4 292.1 1056.3 285.5 1051.4 279.6 C1046.5 273.7 1041.7 268.2 1035.8 262.0 C1029.9 255.8 1022.7 248.3 1016.2 242.4 C1009.7 236.5 1003.1 231.4 996.6 226.8 C990.1 222.2 985.1 218.8 977.0 215.0 C968.9 211.2 957.5 207.2 947.7 204.3 C937.9 201.4 929.8 199.3 918.3 197.4 C906.8 195.5 888.5 194.0 879.0 193.1 C869.5 192.2 869.3 192.2 861.0 192.2 C852.7 192.1 840.8 191.7 829.0 192.8 C817.2 193.9 803.0 196.0 790.0 198.6 C777.0 201.2 764.0 203.8 751.0 208.3 C738.0 212.8 725.2 218.4 712.3 225.8 C699.4 233.2 685.1 243.6 673.4 253.0 C661.7 262.4 651.7 271.3 642.0 282.0 C632.3 292.7 622.7 305.3 615.0 317.0 C607.3 328.7 601.1 339.7 595.6 352.0 C590.1 364.3 585.6 378.3 582.0 391.0 C578.4 403.7 576.7 415.2 574.0 428.0 C571.3 440.8 568.0 456.0 566.0 468.0 C564.0 480.0 562.9 490.5 562.0 500.0 C561.1 509.5 560.9 520.8 560.7 525.0 L551.9 526.2 L548.1 525.1 L544.5 524.0 L540.9 522.9 L537.5 521.8 L534.1 520.6 L530.9 519.5 L527.8 518.3 L524.8 517.1 L521.9 515.9 L519.1 514.7 L516.4 513.5 L513.9 512.3 L511.4 511.1 L509.1 509.8 L506.9 508.6 L504.8 507.3 L502.9 506.0 L501.0 504.8 L499.3 503.5 L497.7 502.2 L496.3 500.9 L494.9 499.6 L493.7 498.3 L492.6 497.0 L491.6 495.7 L490.8 494.4 L490.0 493.1 L489.4 491.7 L489.0 490.4 L488.6 489.1 L488.4 487.8 L488.3 486.4 L488.3 485.1 L488.5 483.8 L488.8 482.5 L489.2 481.1 L489.7 479.8 L490.4 478.5 L491.2 477.2 L492.1 475.9Z" fill="#dcf47c" opacity=".36"/>
<path d="M495.7 476.0 L495.8 474.5 L495.9 473.0 L496.0 471.5 L496.1 470.0 L496.2 468.5 L496.3 467.0 L496.4 465.5 L496.5 464.1 L496.7 462.6 L496.8 461.1 L497.0 459.6 L497.1 458.1 L497.3 456.6 L497.4 455.1 L497.6 453.7 L497.8 452.2 L498.0 450.7 L498.2 449.2 L498.4 447.7 L498.6 446.2 L498.8 444.8 L499.0 443.3 L499.2 441.8 L499.5 440.3 L499.7 438.9 L499.9 437.4 L500.2 435.9 L500.4 434.4 L500.7 433.0 L501.0 431.5 L501.3 430.0 L501.5 428.5 L501.8 427.1 L502.1 425.6 L502.4 424.1 L502.7 422.7 L503.0 421.2 L503.4 419.8 L503.7 418.3 L504.0 416.8 L504.4 415.4 L504.7 413.9 L505.1 412.5 L505.4 411.0 L505.8 409.6 L506.2 408.1 L506.5 406.7 L506.9 405.2 L507.3 403.8 L507.7 402.3 L508.1 400.9 L508.5 399.5 L508.9 398.0 L509.3 396.6 L509.8 395.1 L510.2 393.7 L510.6 392.3 L511.1 390.8 L511.5 389.4 L512.0 388.0 L512.5 386.6 L512.9 385.1 L513.4 383.7 L513.9 382.3 L514.4 380.9 L514.9 379.5 L515.4 378.1 L515.9 376.7 L516.4 375.3 L516.9 373.8 L517.4 372.4 L518.0 371.0 L518.5 369.6 L519.1 368.2 L519.6 366.9 L520.2 365.5 L520.7 364.1 L521.3 362.7 L521.9 361.3 L522.4 359.9 L523.0 358.5 L523.6 357.2 L524.2 355.8 L524.8 354.4 L525.4 353.0 L526.0 351.7 L526.7 350.3 L527.3 348.9 L527.9 347.6 L528.6 346.2 L529.2 344.9 L529.8 343.5 L530.5 342.2 L531.2 340.8 L531.8 339.5 L532.5 338.2 L533.2 336.8 L533.9 335.5 L534.6 334.1 L535.3 332.8 L536.0 331.5 L536.7 330.2 L537.4 328.9 L538.1 327.5 L538.8 326.2 L539.6 324.9 L540.3 323.6 L541.0 322.3 L541.8 321.0 L542.5 319.7 L543.3 318.4 L544.1 317.1 L544.8 315.8 L545.6 314.6 L546.4 313.3 L547.2 312.0 L548.0 310.7 L548.8 309.4 L549.6 308.2 L550.4 306.9 L551.2 305.7 L552.0 304.4 L552.8 303.1 L553.6 301.9 L554.5 300.6 L555.3 299.4 L556.2 298.2 L557.0 296.9 L557.9 295.7 L558.7 294.5 L559.6 293.2 L560.5 292.0 L561.4 290.8 L562.2 289.6 L563.1 288.4 L564.0 287.2 L564.9 286.0 L565.8 284.8 L566.7 283.6 L567.6 282.4 L568.6 281.2 L569.5 280.0 L570.4 278.9 L571.3 277.7 L572.3 276.5 L573.2 275.3 L574.2 274.2 L575.1 273.0 L576.1 271.9 L577.1 270.7 L578.0 269.6 L579.0 268.4 L580.0 267.3 L581.0 266.2 L581.9 265.0 L582.9 263.9 L583.9 262.8 L584.9 261.7 L585.9 260.6 L587.0 259.5 L588.0 258.4 L589.0 257.3 L590.0 256.2 L591.0 255.1 L592.1 254.0 L593.1 252.9 L594.2 251.8 L595.2 250.8 L596.3 249.7 L597.3 248.6 L598.4 247.6 L599.5 246.5 L600.5 245.5 L601.6 244.4 L602.7 243.4 L603.8 242.4 L604.9 241.3 L606.0 240.3 L607.1 239.3 L608.2 238.3 L609.3 237.2 L610.4 236.2 L611.5 235.2 L612.6 234.2 L613.7 233.3 L614.9 232.3 L616.0 231.3 L617.1 230.3 L618.3 229.3 L619.4 228.4 L620.6 227.4 L621.7 226.4 L622.9 225.5 L624.0 224.6 L625.2 223.6 L626.4 222.7 L627.6 221.7 L628.7 220.8 L629.9 219.9 L631.1 219.0 L632.3 218.1 L633.5 217.2 L634.7 216.3 L635.9 215.4 L637.1 214.5 L638.3 213.6 L639.5 212.7 L640.7 211.8 L641.9 211.0 L643.2 210.1 L644.4 209.2 L645.6 208.4 L646.8 207.5 L648.1 206.7 L649.3 205.9 L650.6 205.0 L651.8 204.2 L653.1 203.4 L654.3 202.6 L655.6 201.7 L656.8 200.9 L658.1 200.1 L659.4 199.3 L660.7 198.6 L661.9 197.8 L663.2 197.0 L664.5 196.2 L665.8 195.5 L667.1 194.7 L668.4 193.9 L669.7 193.2 L671.0 192.5 L672.3 191.7 L673.6 191.0 L674.9 190.3 L676.2 189.5 L677.5 188.8 L678.8 188.1 L680.1 187.4 L681.4 186.7 L682.8 186.0 L684.1 185.3 L685.4 184.6 L686.8 184.0 L688.1 183.3 L689.4 182.6 L690.8 182.0 L692.1 181.3 L693.5 180.7 L694.8 180.0 L696.2 179.4 L697.5 178.8 L698.9 178.2 L700.3 177.5 L701.6 176.9 L703.0 176.3 L704.4 175.7 L705.7 175.1 L707.1 174.5 L708.5 174.0 L709.9 173.4 L711.2 172.8 L712.6 172.3 L714.0 171.7 L715.4 171.2 L716.8 170.6 L718.2 170.1 L719.6 169.5 L721.0 169.0 L722.4 168.5 L723.8 168.0 L725.2 167.5 L726.6 167.0 L728.0 166.5 L729.4 166.0 L730.8 165.5 L732.2 165.0 L733.6 164.6 L735.1 164.1 L736.5 163.6 L737.9 163.2 L739.3 162.7 L740.8 162.3 L742.2 161.9 L743.6 161.4 L745.0 161.0 L746.5 160.6 L747.9 160.2 L749.3 159.8 L750.8 159.4 L752.2 159.0 L753.7 158.6 L755.1 158.2 L756.5 157.9 L758.0 157.5 L759.4 157.1 L760.9 156.8 L762.3 156.4 L763.8 156.1 L765.2 155.8 L766.7 155.4 L768.1 155.1 L769.6 154.8 L771.1 154.5 L772.5 154.2 L774.0 153.9 L775.4 153.6 L776.9 153.3 L778.4 153.1 L779.8 152.8 L781.3 152.5 L782.8 152.3 L784.2 152.0 L785.7 151.8 L787.2 151.5 L788.6 151.3 L790.1 151.1 L791.6 150.9 L793.0 150.6 L794.5 150.4 L796.0 150.2 L797.5 150.0 L798.9 150.0 L800.4 150.0 L801.9 150.0 L803.4 150.0 L804.9 150.0 L806.3 150.0 L807.8 150.0 L809.3 150.0 L810.8 150.0 L812.3 150.0 L813.7 150.0 L815.2 150.0 L816.7 150.0 L818.2 150.0 L819.7 150.0 L821.2 150.0 L822.6 150.0 L824.1 150.0 L825.6 150.0 L827.1 150.0 L828.6 150.0 L830.1 150.0 L831.5 150.0 L833.0 150.0 L834.5 150.0 L836.0 150.0 L837.5 150.0 L839.0 150.0 L840.5 150.0 L841.9 150.0 L843.4 150.0 L844.9 150.0 L846.4 150.0 L847.9 150.0 L849.4 150.0 L850.8 150.0 L852.3 150.0 L853.8 150.0 L855.3 150.0 L856.8 150.0 L858.3 150.0 L859.7 150.0 L861.2 150.0 L862.7 150.0 L864.2 150.0 L865.7 150.0 L867.1 150.0 L868.6 150.0 L870.1 150.0 L871.6 150.0 L873.0 150.0 L874.5 150.0 L876.0 150.0 L877.5 150.0 L878.9 150.0 L880.4 150.0 L881.9 150.0 L883.4 150.0 L884.8 150.2 L886.3 150.4 L887.8 150.6 L889.2 150.8 L890.7 151.0 L892.2 151.2 L893.6 151.5 L895.1 151.7 L896.5 151.9 L898.0 152.2 L899.5 152.5 L900.9 152.7 L902.4 153.0 L903.8 153.3 L905.3 153.5 L906.7 153.8 L908.2 154.1 L909.6 154.4 L911.1 154.7 L912.5 155.0 L914.0 155.4 L915.4 155.7 L916.9 156.0 L918.3 156.3 L919.8 156.7 L921.2 157.0 L922.6 157.4 L924.1 157.8 L925.5 158.1 L926.9 158.5 L928.4 158.9 L929.8 159.3 L931.2 159.7 L932.6 160.1 L934.1 160.5 L935.5 160.9 L936.9 161.3 L938.3 161.7 L939.7 162.2 L941.1 162.6 L942.5 163.1 L944.0 163.5 L945.4 164.0 L946.8 164.4 L948.2 164.9 L949.6 165.4 L951.0 165.9 L952.4 166.3 L953.8 166.8 L955.1 167.3 L956.5 167.8 L957.9 168.4 L959.3 168.9 L960.7 169.4 L962.1 169.9 L963.4 170.5 L964.8 171.0 L966.2 171.6 L967.6 172.1 L968.9 172.7 L970.3 173.2 L971.7 173.8 L973.0 174.4 L974.4 175.0 L975.7 175.6 L977.1 176.2 L978.4 176.8 L979.8 177.4 L981.1 178.0 L982.5 178.6 L983.8 179.2 L985.1 179.9 L986.5 180.5 L987.8 181.2 L989.1 181.8 L990.4 182.5 L991.8 183.1 L993.1 183.8 L994.4 184.5 L995.7 185.1 L997.0 185.8 L998.3 186.5 L999.6 187.2 L1000.9 187.9 L1002.2 188.6 L1003.5 189.3 L1004.8 190.1 L1006.1 190.8 L1007.4 191.5 L1008.7 192.3 L1009.9 193.0 L1011.2 193.8 L1012.5 194.5 L1013.7 195.3 L1015.0 196.0 L1016.3 196.8 L1017.5 197.6 L1018.8 198.4 L1020.0 199.1 L1021.3 199.9 L1022.5 200.7 L1023.7 201.5 L1025.0 202.3 L1026.2 203.2 L1027.4 204.0 L1028.7 204.8 L1029.9 205.6 L1031.1 206.5 L1032.3 207.3 L1033.5 208.2 L1034.7 209.0 L1035.9 209.9 L1037.1 210.7 L1038.3 211.6 L1039.5 212.5 L1040.7 213.4 L1041.9 214.2 L1043.1 215.1 L1044.2 216.0 L1045.4 216.9 L1046.6 217.8 L1047.7 218.7 L1048.9 219.7 L1050.1 220.6 L1051.2 221.5 L1052.4 222.4 L1053.5 223.4 L1054.6 224.3 L1055.8 225.3 L1056.9 226.2 L1058.0 227.2 L1059.1 228.1 L1060.3 229.1 L1061.4 230.1 L1062.5 231.0 L1063.6 232.0 L1064.7 233.0 L1065.8 234.0 L1066.9 235.0 L1068.0 236.0 L1069.0 237.0 L1070.1 238.0 L1071.2 239.0 L1072.3 240.0 L1073.3 241.1 L1074.4 242.1 L1075.4 243.1 L1076.5 244.2 L1077.5 245.2 L1078.6 246.2 L1079.6 247.3 L1080.6 248.4 L1081.7 249.4 L1082.7 250.5 L1083.7 251.6 L1084.7 252.6 L1085.7 253.7 L1086.7 254.8 L1087.7 255.9 L1088.7 257.0 L1089.7 258.1 L1090.7 259.2 L1091.7 260.3 L1092.7 261.4 L1093.6 262.5 L1094.6 263.6 L1095.6 264.7 L1096.5 265.9 L1097.5 267.0 L1098.4 268.1 L1099.4 269.3 L1100.3 270.4 L1101.2 271.6 L1102.1 272.7 L1103.1 273.9 L1104.0 275.0 L1104.9 276.2 L1105.8 277.4 L1106.7 278.5 L1107.6 279.7 L1108.5 280.9 L1109.4 282.1 L1110.2 283.3 L1111.1 284.5 L1112.0 285.7 L1112.8 286.9 L1113.7 288.1 L1114.6 289.3 L1115.4 290.5 L1116.2 291.7 L1117.1 292.9 L1117.9 294.2 L1118.7 295.4 L1119.6 296.6 L1120.4 297.8 L1121.2 299.1 L1122.0 300.3 L1122.8 301.6 L1123.6 302.8 L1124.4 304.1 L1125.1 305.3 L1125.9 306.6 L1126.7 307.9 L1127.5 309.1 L1128.2 310.4 L1129.0 311.7 L1129.7 312.9 L1130.5 314.2 L1131.2 315.5 L1131.9 316.8 L1132.7 318.1 L1133.4 319.4 L1134.1 320.7 L1134.8 322.0 L1135.5 323.3 L1136.2 324.6 L1136.9 325.9 L1137.6 327.2 L1138.3 328.5 L1138.9 329.8 L1139.6 331.2 L1140.3 332.5 L1140.9 333.8 L1141.6 335.1 L1142.2 336.5 L1142.9 337.8 L1143.5 339.1 L1144.1 340.5 L1144.8 341.8 L1145.4 343.2 L1146.0 344.5 L1146.6 345.9 L1147.2 347.2 L1147.8 348.6 L1148.4 350.0 L1149.0 351.3 L1149.5 352.7 L1150.1 354.1 L1150.7 355.4 L1151.2 356.8 L1151.8 358.2 L1152.3 359.6 L1152.9 360.9 L1153.4 362.3 L1153.9 363.7 L1154.4 365.1 L1155.0 366.5 L1155.5 367.9 L1156.0 369.3 L1156.5 370.7 L1156.9 372.1 L1157.4 373.5 L1157.9 374.9 L1158.4 376.3 L1158.8 377.7 L1159.3 379.1 L1159.8 380.5 L1160.2 381.9 L1160.7 383.4 L1161.1 384.8 L1161.5 386.2 L1161.9 387.6 L1162.4 389.1 L1162.8 390.5 L1163.2 391.9 L1163.6 393.3 L1164.0 394.8 L1164.3 396.2 L1164.7 397.6 L1165.1 399.1 L1165.5 400.5 L1165.8 402.0 L1166.2 403.4 L1166.5 404.9 L1166.9 406.3 L1167.2 407.7 L1167.5 409.2 L1167.9 410.6 L1168.2 412.1 L1168.5 413.6 L1168.8 415.0 L1169.1 416.5 L1169.4 417.9 L1169.7 419.4 L1169.9 420.8 L1170.2 422.3 L1170.5 423.8 L1170.7 425.2 L1171.0 426.7 L1171.2 428.2 L1171.5 429.6 L1171.7 431.1 L1171.9 432.6 L1172.1 434.1 L1172.4 435.5 L1172.6 437.0 L1172.8 438.5 L1173.0 439.9 L1173.2 441.4 L1173.3 442.9 L1173.5 444.4 L1173.7 445.9 L1173.8 447.3 L1174.0 448.8 L1174.1 450.3 L1174.3 451.8 L1174.4 453.3 L1174.6 454.8 L1174.7 456.2 L1174.8 457.7 L1174.9 459.2 L1175.0 460.7 L1175.1 462.2 L1175.2 463.7 L1175.3 465.2 L1175.4 466.6 L1175.4 468.1 L1175.5 469.6 L1175.6 471.1 L1175.6 472.6 L1175.7 474.1 L1175.7 475.6 L1175.7 477.1 L1175.8 478.6 L1175.8 480.1 L1175.8 481.5 L1175.8 483.0 L1175.8 484.5 L1175.8 486.0 L1175.8 487.5 L1175.8 489.0 L1175.8 490.5 L1175.7 492.0 L1175.7 493.5 L1175.6 495.0 L1175.6 496.5 L1175.5 498.0 L1180.1 498.1 L1182.0 495.6 L1183.6 493.1 L1184.6 490.5 L1185.2 488.0 L1185.3 485.4 L1184.9 482.9 L1184.1 480.3 L1182.8 477.8 L1181.1 475.3 L1178.9 472.8 L1176.2 470.3 L1173.1 467.8 L1169.5 465.4 L1165.5 462.9 L1161.1 460.6 L1156.2 458.2 L1150.9 455.9 L1145.1 453.6 L1139.0 451.4 L1132.4 449.2 L1150.0 447.0 C1148.0 444.2 1141.7 436.2 1138.0 430.0 C1134.3 423.8 1131.2 417.5 1128.0 410.0 C1124.8 402.5 1122.3 394.7 1119.0 385.0 C1115.7 375.3 1112.2 362.0 1108.0 352.0 C1103.8 342.0 1098.5 333.2 1094.0 325.0 C1089.5 316.8 1085.6 310.6 1080.8 303.0 C1076.0 295.4 1070.9 287.4 1065.0 279.6 C1059.1 271.8 1052.1 263.2 1045.6 256.0 C1039.1 248.8 1032.5 242.4 1026.0 236.6 C1019.5 230.8 1014.6 226.6 1006.4 220.9 C998.2 215.2 986.8 207.5 977.0 202.3 C967.2 197.1 957.5 193.5 947.7 189.6 C937.9 185.7 927.1 182.1 918.3 178.8 C909.5 175.5 902.7 173.5 895.0 170.0 C887.3 166.5 877.8 161.3 872.0 158.0 C866.2 154.7 862.0 151.3 860.0 150.0 L799.8 150 L799.8 150.8 L798.4 151.0 L796.9 151.2 L795.5 151.5 L794.0 151.7 L792.6 151.9 L791.2 152.1 L789.7 152.4 L788.3 152.6 L786.8 152.9 L785.4 153.1 L783.9 153.4 L782.5 153.7 L781.1 154.0 L779.6 154.3 L778.2 154.5 L776.8 154.8 L775.3 155.1 L773.9 155.5 L772.5 155.8 L771.0 156.1 L769.6 156.4 L768.2 156.8 L766.8 157.1 L765.3 157.4 L763.9 157.8 L762.5 158.2 L761.1 158.5 L759.6 158.9 L758.2 159.3 L756.8 159.7 L755.4 160.1 L754.0 160.5 L752.6 160.9 L751.2 161.3 L749.8 161.7 L748.3 162.1 L746.9 162.5 L745.5 163.0 L744.1 163.4 L742.7 163.9 L741.3 164.3 L739.9 164.8 L738.5 165.2 L737.2 165.7 L735.8 166.2 L734.4 166.7 L733.0 167.2 L731.6 167.6 L730.2 168.1 L728.8 168.7 L727.5 169.2 L726.1 169.7 L724.7 170.2 L723.3 170.7 L722.0 171.3 L720.6 171.8 L719.2 172.4 L717.9 172.9 L716.5 173.5 L715.1 174.1 L713.8 174.6 L712.4 175.2 L711.1 175.8 L709.7 176.4 L708.4 177.0 L707.0 177.6 L705.7 178.2 L704.3 178.8 L703.0 179.4 L701.6 180.1 L700.3 180.7 L699.0 181.3 L697.7 182.0 L696.3 182.6 L695.0 183.3 L693.7 183.9 L692.4 184.6 L691.0 185.3 L689.7 185.9 L688.4 186.6 L687.1 187.3 L685.8 188.0 L684.5 188.7 L683.2 189.4 L681.9 190.1 L680.6 190.8 L679.3 191.6 L678.0 192.3 L676.8 193.0 L675.5 193.8 L674.2 194.5 L672.9 195.3 L671.6 196.0 L670.4 196.8 L669.1 197.5 L667.8 198.3 L666.6 199.1 L665.3 199.9 L664.1 200.7 L662.8 201.5 L661.6 202.3 L660.3 203.1 L659.1 203.9 L657.9 204.7 L656.6 205.5 L655.4 206.3 L654.2 207.2 L652.9 208.0 L651.7 208.8 L650.5 209.7 L649.3 210.5 L648.1 211.4 L646.9 212.3 L645.7 213.1 L644.5 214.0 L643.3 214.9 L642.1 215.8 L640.9 216.7 L639.7 217.6 L638.5 218.5 L637.4 219.4 L636.2 220.3 L635.0 221.2 L633.8 222.1 L632.7 223.0 L631.5 224.0 L630.4 224.9 L629.2 225.8 L628.1 226.8 L626.9 227.7 L625.8 228.7 L624.7 229.6 L623.5 230.6 L622.4 231.6 L621.3 232.5 L620.2 233.5 L619.0 234.5 L617.9 235.5 L616.8 236.5 L615.7 237.5 L614.6 238.5 L613.5 239.5 L612.4 240.5 L611.4 241.5 L610.3 242.5 L609.2 243.6 L608.1 244.6 L607.1 245.6 L606.0 246.7 L604.9 247.7 L603.9 248.7 L602.8 249.8 L601.8 250.9 L600.7 251.9 L599.7 253.0 L598.7 254.0 L597.6 255.1 L596.6 256.2 L595.6 257.3 L594.6 258.4 L593.6 259.5 L592.6 260.6 L591.6 261.7 L590.6 262.8 L589.6 263.9 L588.6 265.0 L587.6 266.1 L586.6 267.2 L585.6 268.3 L584.7 269.5 L583.7 270.6 L582.8 271.7 L581.8 272.9 L580.9 274.0 L579.9 275.2 L579.0 276.3 L578.0 277.5 L577.1 278.7 L576.2 279.8 L575.3 281.0 L574.3 282.2 L573.4 283.3 L572.5 284.5 L571.6 285.7 L570.7 286.9 L569.8 288.1 L568.9 289.3 L568.1 290.5 L567.2 291.7 L566.3 292.9 L565.5 294.1 L564.6 295.3 L563.7 296.5 L562.9 297.8 L562.0 299.0 L561.2 300.2 L560.4 301.4 L559.5 302.7 L558.7 303.9 L557.9 305.2 L557.1 306.4 L556.3 307.7 L555.5 308.9 L554.7 310.2 L553.9 311.4 L553.1 312.7 L552.3 314.0 L551.5 315.2 L550.8 316.5 L550.0 317.8 L549.2 319.1 L548.5 320.3 L547.7 321.6 L547.0 322.9 L546.3 324.2 L545.5 325.5 L544.8 326.8 L544.1 328.1 L543.4 329.4 L542.6 330.7 L541.9 332.0 L541.2 333.3 L540.5 334.6 L539.9 336.0 L539.2 337.3 L538.5 338.6 L537.8 339.9 L537.2 341.3 L536.5 342.6 L535.8 343.9 L535.2 345.3 L534.6 346.6 L533.9 347.9 L533.3 349.3 L532.7 350.6 L532.0 352.0 L531.4 353.3 L530.8 354.7 L530.2 356.1 L529.6 357.4 L529.0 358.8 L528.4 360.1 L527.9 361.5 L527.3 362.9 L526.7 364.3 L526.1 365.6 L525.6 367.0 L525.0 368.4 L524.5 369.8 L524.0 371.1 L523.4 372.5 L522.9 373.9 L522.4 375.3 L521.9 376.7 L521.3 378.1 L520.8 379.5 L520.3 380.9 L519.9 382.3 L519.4 383.7 L518.9 385.1 L518.4 386.5 L518.0 387.9 L517.5 389.3 L517.0 390.7 L516.6 392.1 L516.1 393.6 L515.7 395.0 L515.3 396.4 L514.8 397.8 L514.4 399.2 L514.0 400.7 L513.6 402.1 L513.2 403.5 L512.8 404.9 L512.4 406.4 L512.0 407.8 L511.7 409.2 L511.3 410.7 L510.9 412.1 L510.6 413.5 L510.2 415.0 L509.9 416.4 L509.5 417.9 L509.2 419.3 L508.9 420.7 L508.6 422.2 L508.2 423.6 L507.9 425.1 L507.6 426.5 L507.3 428.0 L507.0 429.4 L506.8 430.9 L506.5 432.3 L506.2 433.8 L505.9 435.2 L505.7 436.7 L505.4 438.1 L505.2 439.6 L504.9 441.1 L504.7 442.5 L504.5 444.0 L504.3 445.4 L504.0 446.9 L503.8 448.4 L503.6 449.8 L503.4 451.3 L503.3 452.7 L503.1 454.2 L502.9 455.7 L502.7 457.1 L502.6 458.6 L502.4 460.1 L502.2 461.5 L502.1 463.0 L502.0 464.5 L501.8 465.9 L501.7 467.4 L501.6 468.9 L501.5 470.3 L501.4 471.8 L501.3 473.3 L501.2 474.8 L501.1 476.2 L501.0 477.7 L500.9 479.2 L500.8 480.6 L500.8 482.1 L500.7 483.6 L500.7 485.0 L500.6 486.5 L500.6 488.0 L500.6 489.5 L500.5 490.9 L500.5 492.4 L500.5 493.9 L500.5 495.3 L500.5 496.8 L500.5 498.3 L500.5 499.7Z" fill="#c6e664" opacity=".4"/>
<path d="M500.5 499.7 L500.5 498.3 L500.5 496.8 L500.5 495.3 L500.5 493.9 L500.5 492.4 L500.5 490.9 L500.6 489.5 L500.6 488.0 L500.6 486.5 L500.7 485.0 L500.7 483.6 L500.8 482.1 L500.8 480.6 L500.9 479.2 L501.0 477.7 L501.1 476.2 L501.2 474.8 L501.3 473.3 L501.4 471.8 L501.5 470.3 L501.6 468.9 L501.7 467.4 L501.8 465.9 L502.0 464.5 L502.1 463.0 L502.2 461.5 L502.4 460.1 L502.6 458.6 L502.7 457.1 L502.9 455.7 L503.1 454.2 L503.3 452.7 L503.4 451.3 L503.6 449.8 L503.8 448.4 L504.0 446.9 L504.3 445.4 L504.5 444.0 L504.7 442.5 L504.9 441.1 L505.2 439.6 L505.4 438.1 L505.7 436.7 L505.9 435.2 L506.2 433.8 L506.5 432.3 L506.8 430.9 L507.0 429.4 L507.3 428.0 L507.6 426.5 L507.9 425.1 L508.2 423.6 L508.6 422.2 L508.9 420.7 L509.2 419.3 L509.5 417.9 L509.9 416.4 L510.2 415.0 L510.6 413.5 L510.9 412.1 L511.3 410.7 L511.7 409.2 L512.0 407.8 L512.4 406.4 L512.8 404.9 L513.2 403.5 L513.6 402.1 L514.0 400.7 L514.4 399.2 L514.8 397.8 L515.3 396.4 L515.7 395.0 L516.1 393.6 L516.6 392.1 L517.0 390.7 L517.5 389.3 L518.0 387.9 L518.4 386.5 L518.9 385.1 L519.4 383.7 L519.9 382.3 L520.3 380.9 L520.8 379.5 L521.3 378.1 L521.9 376.7 L522.4 375.3 L522.9 373.9 L523.4 372.5 L524.0 371.1 L524.5 369.8 L525.0 368.4 L525.6 367.0 L526.1 365.6 L526.7 364.3 L527.3 362.9 L527.9 361.5 L528.4 360.1 L529.0 358.8 L529.6 357.4 L530.2 356.1 L530.8 354.7 L531.4 353.3 L532.0 352.0 L532.7 350.6 L533.3 349.3 L533.9 347.9 L534.6 346.6 L535.2 345.3 L535.8 343.9 L536.5 342.6 L537.2 341.3 L537.8 339.9 L538.5 338.6 L539.2 337.3 L539.9 336.0 L540.5 334.6 L541.2 333.3 L541.9 332.0 L542.6 330.7 L543.4 329.4 L544.1 328.1 L544.8 326.8 L545.5 325.5 L546.3 324.2 L547.0 322.9 L547.7 321.6 L548.5 320.3 L549.2 319.1 L550.0 317.8 L550.8 316.5 L551.5 315.2 L552.3 314.0 L553.1 312.7 L553.9 311.4 L554.7 310.2 L555.5 308.9 L556.3 307.7 L557.1 306.4 L557.9 305.2 L558.7 303.9 L559.5 302.7 L560.4 301.4 L561.2 300.2 L562.0 299.0 L562.9 297.8 L563.7 296.5 L564.6 295.3 L565.5 294.1 L566.3 292.9 L567.2 291.7 L568.1 290.5 L568.9 289.3 L569.8 288.1 L570.7 286.9 L571.6 285.7 L572.5 284.5 L573.4 283.3 L574.3 282.2 L575.3 281.0 L576.2 279.8 L577.1 278.7 L578.0 277.5 L579.0 276.3 L579.9 275.2 L580.9 274.0 L581.8 272.9 L582.8 271.7 L583.7 270.6 L584.7 269.5 L585.6 268.3 L586.6 267.2 L587.6 266.1 L588.6 265.0 L589.6 263.9 L590.6 262.8 L591.6 261.7 L592.6 260.6 L593.6 259.5 L594.6 258.4 L595.6 257.3 L596.6 256.2 L597.6 255.1 L598.7 254.0 L599.7 253.0 L600.7 251.9 L601.8 250.9 L602.8 249.8 L603.9 248.7 L604.9 247.7 L606.0 246.7 L607.1 245.6 L608.1 244.6 L609.2 243.6 L610.3 242.5 L611.4 241.5 L612.4 240.5 L613.5 239.5 L614.6 238.5 L615.7 237.5 L616.8 236.5 L617.9 235.5 L619.0 234.5 L620.2 233.5 L621.3 232.5 L622.4 231.6 L623.5 230.6 L624.7 229.6 L625.8 228.7 L626.9 227.7 L628.1 226.8 L629.2 225.8 L630.4 224.9 L631.5 224.0 L632.7 223.0 L633.8 222.1 L635.0 221.2 L636.2 220.3 L637.4 219.4 L638.5 218.5 L639.7 217.6 L640.9 216.7 L642.1 215.8 L643.3 214.9 L644.5 214.0 L645.7 213.1 L646.9 212.3 L648.1 211.4 L649.3 210.5 L650.5 209.7 L651.7 208.8 L652.9 208.0 L654.2 207.2 L655.4 206.3 L656.6 205.5 L657.9 204.7 L659.1 203.9 L660.3 203.1 L661.6 202.3 L662.8 201.5 L664.1 200.7 L665.3 199.9 L666.6 199.1 L667.8 198.3 L669.1 197.5 L670.4 196.8 L671.6 196.0 L672.9 195.3 L674.2 194.5 L675.5 193.8 L676.8 193.0 L678.0 192.3 L679.3 191.6 L680.6 190.8 L681.9 190.1 L683.2 189.4 L684.5 188.7 L685.8 188.0 L687.1 187.3 L688.4 186.6 L689.7 185.9 L691.0 185.3 L692.4 184.6 L693.7 183.9 L695.0 183.3 L696.3 182.6 L697.7 182.0 L699.0 181.3 L700.3 180.7 L701.6 180.1 L703.0 179.4 L704.3 178.8 L705.7 178.2 L707.0 177.6 L708.4 177.0 L709.7 176.4 L711.1 175.8 L712.4 175.2 L713.8 174.6 L715.1 174.1 L716.5 173.5 L717.9 172.9 L719.2 172.4 L720.6 171.8 L722.0 171.3 L723.3 170.7 L724.7 170.2 L726.1 169.7 L727.5 169.2 L728.8 168.7 L730.2 168.1 L731.6 167.6 L733.0 167.2 L734.4 166.7 L735.8 166.2 L737.2 165.7 L738.5 165.2 L739.9 164.8 L741.3 164.3 L742.7 163.9 L744.1 163.4 L745.5 163.0 L746.9 162.5 L748.3 162.1 L749.8 161.7 L751.2 161.3 L752.6 160.9 L754.0 160.5 L755.4 160.1 L756.8 159.7 L758.2 159.3 L759.6 158.9 L761.1 158.5 L762.5 158.2 L763.9 157.8 L765.3 157.4 L766.8 157.1 L768.2 156.8 L769.6 156.4 L771.0 156.1 L772.5 155.8 L773.9 155.5 L775.3 155.1 L776.8 154.8 L778.2 154.5 L779.6 154.3 L781.1 154.0 L782.5 153.7 L783.9 153.4 L785.4 153.1 L786.8 152.9 L788.3 152.6 L789.7 152.4 L791.2 152.1 L792.6 151.9 L794.0 151.7 L795.5 151.5 L796.9 151.2 L798.4 151.0 L799.8 150.8 L801.3 150.6 L802.7 150.4 L804.2 150.3 L805.6 150.1 L807.1 150.0 L808.5 150.0 L810.0 150.0 L811.4 150.0 L812.9 150.0 L814.3 150.0 L815.8 150.0 L817.2 150.0 L818.7 150.0 L820.1 150.0 L821.6 150.0 L823.0 150.0 L824.5 150.0 L826.0 150.0 L827.4 150.0 L828.9 150.0 L830.3 150.0 L831.8 150.0 L833.2 150.0 L834.7 150.0 L836.1 150.0 L837.6 150.0 L839.1 150.0 L840.5 150.0 L842.0 150.0 L843.4 150.0 L844.9 150.0 L846.3 150.0 L847.8 150.0 L849.2 150.0 L850.7 150.0 L852.1 150.0 L853.6 150.0 L855.0 150.0 L856.5 150.0 L858.0 150.0 L859.4 150.0 L860.9 150.0 L862.3 150.0 L863.8 150.0 L865.2 150.0 L866.7 150.0 L868.1 150.0 L869.5 150.0 L871.0 150.0 L872.4 150.0 L873.9 150.0 L875.3 150.0 L876.8 150.0 L878.2 150.0 L879.7 150.0 L881.1 150.0 L882.5 150.0 L884.0 150.0 L885.4 150.2 L886.9 150.4 L888.3 150.5 L889.7 150.7 L891.2 150.9 L892.6 151.1 L894.0 151.4 L895.5 151.6 L896.9 151.8 L898.3 152.0 L899.7 152.3 L901.2 152.5 L902.6 152.8 L904.0 153.0 L905.4 153.3 L906.9 153.6 L908.3 153.8 L909.7 154.1 L911.1 154.4 L912.5 154.7 L913.9 155.0 L915.3 155.3 L916.8 155.6 L918.2 155.9 L919.6 156.3 L921.0 156.6 L922.4 156.9 L923.8 157.3 L925.2 157.6 L926.6 158.0 L928.0 158.4 L929.4 158.7 L930.8 159.1 L932.2 159.5 L933.6 159.9 L934.9 160.3 L936.3 160.7 L937.7 161.1 L939.1 161.5 L940.5 161.9 L941.9 162.3 L943.2 162.8 L944.6 163.2 L946.0 163.6 L947.3 164.1 L948.7 164.6 L950.1 165.0 L951.4 165.5 L952.8 166.0 L954.2 166.4 L955.5 166.9 L956.9 167.4 L958.2 167.9 L959.6 168.4 L960.9 168.9 L962.3 169.4 L963.6 170.0 L964.9 170.5 L966.3 171.0 L967.6 171.6 L968.9 172.1 L970.3 172.7 L971.6 173.2 L972.9 173.8 L974.2 174.4 L975.6 174.9 L976.9 175.5 L978.2 176.1 L979.5 176.7 L980.8 177.3 L982.1 177.9 L983.4 178.5 L984.7 179.1 L986.0 179.8 L987.3 180.4 L988.6 181.0 L989.9 181.7 L991.2 182.3 L992.5 183.0 L993.7 183.6 L995.0 184.3 L996.3 185.0 L997.6 185.6 L998.8 186.3 L1000.1 187.0 L1001.3 187.7 L1002.6 188.4 L1003.9 189.1 L1005.1 189.8 L1006.4 190.5 L1007.6 191.2 L1008.8 192.0 L1010.1 192.7 L1011.3 193.4 L1012.5 194.2 L1013.8 194.9 L1015.0 195.7 L1016.2 196.4 L1017.4 197.2 L1018.6 198.0 L1019.9 198.7 L1021.1 199.5 L1022.3 200.3 L1023.5 201.1 L1024.7 201.9 L1025.9 202.7 L1027.0 203.5 L1028.2 204.3 L1029.4 205.1 L1030.6 206.0 L1031.8 206.8 L1032.9 207.6 L1034.1 208.5 L1035.3 209.3 L1036.4 210.2 L1037.6 211.0 L1038.7 211.9 L1039.9 212.7 L1041.0 213.6 L1042.1 214.5 L1043.3 215.4 L1044.4 216.2 L1045.5 217.1 L1046.7 218.0 L1047.8 218.9 L1048.9 219.8 L1050.0 220.8 L1051.1 221.7 L1052.2 222.6 L1053.3 223.5 L1054.4 224.5 L1055.5 225.4 L1056.6 226.3 L1057.7 227.3 L1058.7 228.2 L1059.8 229.2 L1060.9 230.1 L1062.0 231.1 L1063.0 232.1 L1064.1 233.1 L1065.1 234.0 L1066.2 235.0 L1067.2 236.0 L1068.2 237.0 L1069.3 238.0 L1070.3 239.0 L1071.3 240.0 L1072.4 241.0 L1073.4 242.1 L1074.4 243.1 L1075.4 244.1 L1076.4 245.1 L1077.4 246.2 L1078.4 247.2 L1079.4 248.3 L1080.3 249.3 L1081.3 250.4 L1082.3 251.4 L1083.3 252.5 L1084.2 253.5 L1085.2 254.6 L1086.1 255.7 L1087.1 256.8 L1088.0 257.9 L1089.0 259.0 L1089.9 260.0 L1090.9 261.1 L1091.8 262.2 L1092.7 263.4 L1093.6 264.5 L1094.5 265.6 L1095.4 266.7 L1096.3 267.8 L1097.2 269.0 L1098.1 270.1 L1099.0 271.2 L1099.9 272.4 L1100.8 273.5 L1101.6 274.6 L1102.5 275.8 L1103.4 277.0 L1104.2 278.1 L1105.1 279.3 L1105.9 280.4 L1106.7 281.6 L1107.6 282.8 L1108.4 284.0 L1109.2 285.2 L1110.1 286.3 L1110.9 287.5 L1111.7 288.7 L1112.5 289.9 L1113.3 291.1 L1114.1 292.3 L1114.9 293.5 L1115.6 294.8 L1116.4 296.0 L1117.2 297.2 L1118.0 298.4 L1118.7 299.6 L1119.5 300.9 L1120.2 302.1 L1121.0 303.3 L1121.7 304.6 L1122.4 305.8 L1123.2 307.1 L1123.9 308.3 L1124.6 309.6 L1125.3 310.8 L1126.0 312.1 L1126.7 313.4 L1127.4 314.6 L1128.1 315.9 L1128.8 317.2 L1129.5 318.5 L1130.1 319.7 L1130.8 321.0 L1131.5 322.3 L1132.1 323.6 L1132.8 324.9 L1133.4 326.2 L1134.1 327.5 L1134.7 328.8 L1135.3 330.1 L1135.9 331.4 L1136.5 332.7 L1137.2 334.0 L1137.8 335.3 L1138.4 336.7 L1138.9 338.0 L1139.5 339.3 L1140.1 340.6 L1140.7 342.0 L1141.3 343.3 L1141.8 344.6 L1142.4 346.0 L1142.9 347.3 L1143.5 348.7 L1144.0 350.0 L1144.5 351.4 L1145.1 352.7 L1145.6 354.1 L1146.1 355.4 L1146.6 356.8 L1147.1 358.1 L1147.6 359.5 L1148.1 360.9 L1148.6 362.2 L1149.1 363.6 L1149.6 365.0 L1150.0 366.4 L1150.5 367.7 L1150.9 369.1 L1151.4 370.5 L1151.8 371.9 L1152.3 373.3 L1152.7 374.7 L1153.1 376.1 L1153.6 377.4 L1154.0 378.8 L1154.4 380.2 L1154.8 381.6 L1155.2 383.0 L1155.6 384.4 L1155.9 385.8 L1156.3 387.3 L1156.7 388.7 L1157.1 390.1 L1157.4 391.5 L1157.8 392.9 L1158.1 394.3 L1158.4 395.7 L1158.8 397.1 L1159.1 398.6 L1159.4 400.0 L1159.7 401.4 L1160.1 402.8 L1160.4 404.3 L1160.7 405.7 L1160.9 407.1 L1161.2 408.6 L1161.5 410.0 L1161.8 411.4 L1162.0 412.9 L1162.3 414.3 L1162.6 415.7 L1162.8 417.2 L1163.0 418.6 L1163.3 420.1 L1163.5 421.5 L1163.7 423.0 L1163.9 424.4 L1164.1 425.8 L1164.4 427.3 L1164.5 428.7 L1164.7 430.2 L1164.9 431.6 L1165.1 433.1 L1165.3 434.6 L1165.4 436.0 L1165.6 437.5 L1165.7 438.9 L1165.9 440.4 L1166.0 441.8 L1166.2 443.3 L1166.3 444.8 L1166.4 446.2 L1166.5 447.7 L1166.6 449.1 L1166.7 450.6 L1166.8 452.1 L1166.9 453.5 L1167.0 455.0 L1167.1 456.5 L1167.2 457.9 L1167.2 459.4 L1167.3 460.9 L1167.3 462.3 L1167.4 463.8 L1167.4 465.3 L1167.4 466.7" fill="none" stroke="#f0a080" stroke-width="2.2" opacity=".55"/>
<path d="M500.5 499.7 L500.5 498.3 L500.5 496.8 L500.5 495.3 L500.5 493.9 L500.5 492.4 L500.5 490.9 L500.6 489.5 L500.6 488.0 L500.6 486.5 L500.7 485.0 L500.7 483.6 L500.8 482.1 L500.8 480.6 L500.9 479.2 L501.0 477.7 L501.1 476.2 L501.2 474.8 L501.3 473.3 L501.4 471.8 L501.5 470.3 L501.6 468.9 L501.7 467.4 L501.8 465.9 L502.0 464.5 L502.1 463.0 L502.2 461.5 L502.4 460.1 L502.6 458.6 L502.7 457.1 L502.9 455.7 L503.1 454.2 L503.3 452.7 L503.4 451.3 L503.6 449.8 L503.8 448.4 L504.0 446.9 L504.3 445.4 L504.5 444.0 L504.7 442.5 L504.9 441.1 L505.2 439.6 L505.4 438.1 L505.7 436.7 L505.9 435.2 L506.2 433.8 L506.5 432.3 L506.8 430.9 L507.0 429.4 L507.3 428.0 L507.6 426.5 L507.9 425.1 L508.2 423.6 L508.6 422.2 L508.9 420.7 L509.2 419.3 L509.5 417.9 L509.9 416.4 L510.2 415.0 L510.6 413.5 L510.9 412.1 L511.3 410.7 L511.7 409.2 L512.0 407.8 L512.4 406.4 L512.8 404.9 L513.2 403.5 L513.6 402.1 L514.0 400.7 L514.4 399.2 L514.8 397.8 L515.3 396.4 L515.7 395.0 L516.1 393.6 L516.6 392.1 L517.0 390.7 L517.5 389.3 L518.0 387.9 L518.4 386.5 L518.9 385.1 L519.4 383.7 L519.9 382.3 L520.3 380.9 L520.8 379.5 L521.3 378.1 L521.9 376.7 L522.4 375.3 L522.9 373.9 L523.4 372.5 L524.0 371.1 L524.5 369.8 L525.0 368.4 L525.6 367.0 L526.1 365.6 L526.7 364.3 L527.3 362.9 L527.9 361.5 L528.4 360.1 L529.0 358.8 L529.6 357.4 L530.2 356.1 L530.8 354.7 L531.4 353.3 L532.0 352.0 L532.7 350.6 L533.3 349.3 L533.9 347.9 L534.6 346.6 L535.2 345.3 L535.8 343.9 L536.5 342.6 L537.2 341.3 L537.8 339.9 L538.5 338.6 L539.2 337.3 L539.9 336.0 L540.5 334.6 L541.2 333.3 L541.9 332.0 L542.6 330.7 L543.4 329.4 L544.1 328.1 L544.8 326.8 L545.5 325.5 L546.3 324.2 L547.0 322.9 L547.7 321.6 L548.5 320.3 L549.2 319.1 L550.0 317.8 L550.8 316.5 L551.5 315.2 L552.3 314.0 L553.1 312.7 L553.9 311.4 L554.7 310.2 L555.5 308.9 L556.3 307.7 L557.1 306.4 L557.9 305.2 L558.7 303.9 L559.5 302.7 L560.4 301.4 L561.2 300.2 L562.0 299.0 L562.9 297.8 L563.7 296.5 L564.6 295.3 L565.5 294.1 L566.3 292.9 L567.2 291.7 L568.1 290.5 L568.9 289.3 L569.8 288.1 L570.7 286.9 L571.6 285.7 L572.5 284.5 L573.4 283.3 L574.3 282.2 L575.3 281.0 L576.2 279.8 L577.1 278.7 L578.0 277.5 L579.0 276.3 L579.9 275.2 L580.9 274.0 L581.8 272.9 L582.8 271.7 L583.7 270.6 L584.7 269.5 L585.6 268.3 L586.6 267.2 L587.6 266.1 L588.6 265.0 L589.6 263.9 L590.6 262.8 L591.6 261.7 L592.6 260.6 L593.6 259.5 L594.6 258.4 L595.6 257.3 L596.6 256.2 L597.6 255.1 L598.7 254.0 L599.7 253.0 L600.7 251.9 L601.8 250.9 L602.8 249.8 L603.9 248.7 L604.9 247.7 L606.0 246.7 L607.1 245.6 L608.1 244.6 L609.2 243.6 L610.3 242.5 L611.4 241.5 L612.4 240.5 L613.5 239.5 L614.6 238.5 L615.7 237.5 L616.8 236.5 L617.9 235.5 L619.0 234.5 L620.2 233.5 L621.3 232.5 L622.4 231.6 L623.5 230.6 L624.7 229.6 L625.8 228.7 L626.9 227.7 L628.1 226.8 L629.2 225.8 L630.4 224.9 L631.5 224.0 L632.7 223.0 L633.8 222.1 L635.0 221.2 L636.2 220.3 L637.4 219.4 L638.5 218.5 L639.7 217.6 L640.9 216.7 L642.1 215.8 L643.3 214.9 L644.5 214.0 L645.7 213.1 L646.9 212.3 L648.1 211.4 L649.3 210.5 L650.5 209.7 L651.7 208.8 L652.9 208.0 L654.2 207.2 L655.4 206.3 L656.6 205.5 L657.9 204.7 L659.1 203.9 L660.3 203.1 L661.6 202.3 L662.8 201.5 L664.1 200.7 L665.3 199.9 L666.6 199.1 L667.8 198.3 L669.1 197.5 L670.4 196.8 L671.6 196.0 L672.9 195.3 L674.2 194.5 L675.5 193.8 L676.8 193.0 L678.0 192.3 L679.3 191.6 L680.6 190.8 L681.9 190.1 L683.2 189.4 L684.5 188.7 L685.8 188.0 L687.1 187.3 L688.4 186.6 L689.7 185.9 L691.0 185.3 L692.4 184.6 L693.7 183.9 L695.0 183.3 L696.3 182.6 L697.7 182.0 L699.0 181.3 L700.3 180.7 L701.6 180.1 L703.0 179.4 L704.3 178.8 L705.7 178.2 L707.0 177.6 L708.4 177.0 L709.7 176.4 L711.1 175.8 L712.4 175.2 L713.8 174.6 L715.1 174.1 L716.5 173.5 L717.9 172.9 L719.2 172.4 L720.6 171.8 L722.0 171.3 L723.3 170.7 L724.7 170.2 L726.1 169.7 L727.5 169.2 L728.8 168.7 L730.2 168.1 L731.6 167.6 L733.0 167.2 L734.4 166.7 L735.8 166.2 L737.2 165.7 L738.5 165.2 L739.9 164.8 L741.3 164.3 L742.7 163.9 L744.1 163.4 L745.5 163.0 L746.9 162.5 L748.3 162.1 L749.8 161.7 L751.2 161.3 L752.6 160.9 L754.0 160.5 L755.4 160.1 L756.8 159.7 L758.2 159.3 L759.6 158.9 L761.1 158.5 L762.5 158.2 L763.9 157.8 L765.3 157.4 L766.8 157.1 L768.2 156.8 L769.6 156.4 L771.0 156.1 L772.5 155.8 L773.9 155.5 L775.3 155.1 L776.8 154.8 L778.2 154.5 L779.6 154.3 L781.1 154.0 L782.5 153.7 L783.9 153.4 L785.4 153.1 L786.8 152.9 L788.3 152.6 L789.7 152.4 L791.2 152.1 L792.6 151.9 L794.0 151.7 L795.5 151.5 L796.9 151.2 L798.4 151.0 L799.8 150.8 L801.3 150.6 L802.7 150.4 L804.2 150.3 L805.6 150.1 L807.1 150.0 L808.5 150.0 L810.0 150.0 L811.4 150.0 L812.9 150.0 L814.3 150.0 L815.8 150.0 L817.2 150.0 L818.7 150.0 L820.1 150.0 L821.6 150.0 L823.0 150.0 L824.5 150.0 L826.0 150.0 L827.4 150.0 L828.9 150.0 L830.3 150.0 L831.8 150.0 L833.2 150.0 L834.7 150.0 L836.1 150.0 L837.6 150.0 L839.1 150.0 L840.5 150.0 L842.0 150.0 L843.4 150.0 L844.9 150.0 L846.3 150.0 L847.8 150.0 L849.2 150.0 L850.7 150.0 L852.1 150.0 L853.6 150.0 L855.0 150.0 L856.5 150.0 L858.0 150.0 L859.4 150.0 L860.9 150.0 L862.3 150.0 L863.8 150.0 L865.2 150.0 L866.7 150.0 L868.1 150.0 L869.5 150.0 L871.0 150.0 L872.4 150.0 L873.9 150.0 L875.3 150.0 L876.8 150.0 L878.2 150.0 L879.7 150.0 L881.1 150.0 L882.5 150.0 L884.0 150.0 L885.4 150.2 L886.9 150.4 L888.3 150.5 L889.7 150.7 L891.2 150.9 L892.6 151.1 L894.0 151.4 L895.5 151.6 L896.9 151.8 L898.3 152.0 L899.7 152.3 L901.2 152.5 L902.6 152.8 L904.0 153.0 L905.4 153.3 L906.9 153.6 L908.3 153.8 L909.7 154.1 L911.1 154.4 L912.5 154.7 L913.9 155.0 L915.3 155.3 L916.8 155.6 L918.2 155.9 L919.6 156.3 L921.0 156.6 L922.4 156.9 L923.8 157.3 L925.2 157.6 L926.6 158.0 L928.0 158.4 L929.4 158.7 L930.8 159.1 L932.2 159.5 L933.6 159.9 L934.9 160.3 L936.3 160.7 L937.7 161.1 L939.1 161.5 L940.5 161.9 L941.9 162.3 L943.2 162.8 L944.6 163.2 L946.0 163.6 L947.3 164.1 L948.7 164.6 L950.1 165.0 L951.4 165.5 L952.8 166.0 L954.2 166.4 L955.5 166.9 L956.9 167.4 L958.2 167.9 L959.6 168.4 L960.9 168.9 L962.3 169.4 L963.6 170.0 L964.9 170.5 L966.3 171.0 L967.6 171.6 L968.9 172.1 L970.3 172.7 L971.6 173.2 L972.9 173.8 L974.2 174.4 L975.6 174.9 L976.9 175.5 L978.2 176.1 L979.5 176.7 L980.8 177.3 L982.1 177.9 L983.4 178.5 L984.7 179.1 L986.0 179.8 L987.3 180.4 L988.6 181.0 L989.9 181.7 L991.2 182.3 L992.5 183.0 L993.7 183.6 L995.0 184.3 L996.3 185.0 L997.6 185.6 L998.8 186.3 L1000.1 187.0 L1001.3 187.7 L1002.6 188.4 L1003.9 189.1 L1005.1 189.8 L1006.4 190.5 L1007.6 191.2 L1008.8 192.0 L1010.1 192.7 L1011.3 193.4 L1012.5 194.2 L1013.8 194.9 L1015.0 195.7 L1016.2 196.4 L1017.4 197.2 L1018.6 198.0 L1019.9 198.7 L1021.1 199.5 L1022.3 200.3 L1023.5 201.1 L1024.7 201.9 L1025.9 202.7 L1027.0 203.5 L1028.2 204.3 L1029.4 205.1 L1030.6 206.0 L1031.8 206.8 L1032.9 207.6 L1034.1 208.5 L1035.3 209.3 L1036.4 210.2 L1037.6 211.0 L1038.7 211.9 L1039.9 212.7 L1041.0 213.6 L1042.1 214.5 L1043.3 215.4 L1044.4 216.2 L1045.5 217.1 L1046.7 218.0 L1047.8 218.9 L1048.9 219.8 L1050.0 220.8 L1051.1 221.7 L1052.2 222.6 L1053.3 223.5 L1054.4 224.5 L1055.5 225.4 L1056.6 226.3 L1057.7 227.3 L1058.7 228.2 L1059.8 229.2 L1060.9 230.1 L1062.0 231.1 L1063.0 232.1 L1064.1 233.1 L1065.1 234.0 L1066.2 235.0 L1067.2 236.0 L1068.2 237.0 L1069.3 238.0 L1070.3 239.0 L1071.3 240.0 L1072.4 241.0 L1073.4 242.1 L1074.4 243.1 L1075.4 244.1 L1076.4 245.1 L1077.4 246.2 L1078.4 247.2 L1079.4 248.3 L1080.3 249.3 L1081.3 250.4 L1082.3 251.4 L1083.3 252.5 L1084.2 253.5 L1085.2 254.6 L1086.1 255.7 L1087.1 256.8 L1088.0 257.9 L1089.0 259.0 L1089.9 260.0 L1090.9 261.1 L1091.8 262.2 L1092.7 263.4 L1093.6 264.5 L1094.5 265.6 L1095.4 266.7 L1096.3 267.8 L1097.2 269.0 L1098.1 270.1 L1099.0 271.2 L1099.9 272.4 L1100.8 273.5 L1101.6 274.6 L1102.5 275.8 L1103.4 277.0 L1104.2 278.1 L1105.1 279.3 L1105.9 280.4 L1106.7 281.6 L1107.6 282.8 L1108.4 284.0 L1109.2 285.2 L1110.1 286.3 L1110.9 287.5 L1111.7 288.7 L1112.5 289.9 L1113.3 291.1 L1114.1 292.3 L1114.9 293.5 L1115.6 294.8 L1116.4 296.0 L1117.2 297.2 L1118.0 298.4 L1118.7 299.6 L1119.5 300.9 L1120.2 302.1 L1121.0 303.3 L1121.7 304.6 L1122.4 305.8 L1123.2 307.1 L1123.9 308.3 L1124.6 309.6 L1125.3 310.8 L1126.0 312.1 L1126.7 313.4 L1127.4 314.6 L1128.1 315.9 L1128.8 317.2 L1129.5 318.5 L1130.1 319.7 L1130.8 321.0 L1131.5 322.3 L1132.1 323.6 L1132.8 324.9 L1133.4 326.2 L1134.1 327.5 L1134.7 328.8 L1135.3 330.1 L1135.9 331.4 L1136.5 332.7 L1137.2 334.0 L1137.8 335.3 L1138.4 336.7 L1138.9 338.0 L1139.5 339.3 L1140.1 340.6 L1140.7 342.0 L1141.3 343.3 L1141.8 344.6 L1142.4 346.0 L1142.9 347.3 L1143.5 348.7 L1144.0 350.0 L1144.5 351.4 L1145.1 352.7 L1145.6 354.1 L1146.1 355.4 L1146.6 356.8 L1147.1 358.1 L1147.6 359.5 L1148.1 360.9 L1148.6 362.2 L1149.1 363.6 L1149.6 365.0 L1150.0 366.4 L1150.5 367.7 L1150.9 369.1 L1151.4 370.5 L1151.8 371.9 L1152.3 373.3 L1152.7 374.7 L1153.1 376.1 L1153.6 377.4 L1154.0 378.8 L1154.4 380.2 L1154.8 381.6 L1155.2 383.0 L1155.6 384.4 L1155.9 385.8 L1156.3 387.3 L1156.7 388.7 L1157.1 390.1 L1157.4 391.5 L1157.8 392.9 L1158.1 394.3 L1158.4 395.7 L1158.8 397.1 L1159.1 398.6 L1159.4 400.0 L1159.7 401.4 L1160.1 402.8 L1160.4 404.3 L1160.7 405.7 L1160.9 407.1 L1161.2 408.6 L1161.5 410.0 L1161.8 411.4 L1162.0 412.9 L1162.3 414.3 L1162.6 415.7 L1162.8 417.2 L1163.0 418.6 L1163.3 420.1 L1163.5 421.5 L1163.7 423.0 L1163.9 424.4 L1164.1 425.8 L1164.4 427.3 L1164.5 428.7 L1164.7 430.2 L1164.9 431.6 L1165.1 433.1 L1165.3 434.6 L1165.4 436.0 L1165.6 437.5 L1165.7 438.9 L1165.9 440.4 L1166.0 441.8 L1166.2 443.3 L1166.3 444.8 L1166.4 446.2 L1166.5 447.7 L1166.6 449.1 L1166.7 450.6 L1166.8 452.1 L1166.9 453.5 L1167.0 455.0 L1167.1 456.5 L1167.2 457.9 L1167.2 459.4 L1167.3 460.9 L1167.3 462.3 L1167.4 463.8 L1167.4 465.3 L1167.4 466.7" fill="none" stroke="#c8402c" stroke-width="1.3"/>
<path d="M500.5 499.7 L500.5 498.3 L500.5 496.8 L500.5 495.3 L500.5 493.9 L500.5 492.4 L500.5 490.9 L500.6 489.5 L500.6 488.0 L500.6 486.5 L500.7 485.0 L500.7 483.6 L500.8 482.1 L500.8 480.6 L500.9 479.2 L501.0 477.7 L501.1 476.2 L501.2 474.8 L501.3 473.3 L501.4 471.8 L501.5 470.3 L501.6 468.9 L501.7 467.4 L501.8 465.9 L502.0 464.5 L502.1 463.0 L502.2 461.5 L502.4 460.1 L502.6 458.6 L502.7 457.1 L502.9 455.7 L503.1 454.2 L503.3 452.7 L503.4 451.3 L503.6 449.8 L503.8 448.4 L504.0 446.9 L504.3 445.4 L504.5 444.0 L504.7 442.5 L504.9 441.1 L505.2 439.6 L505.4 438.1 L505.7 436.7" fill="none" stroke="#e8542e" stroke-width="2.6"/>
<g font-family="Liberation Sans, sans-serif" font-size="5.500" fill="#d23a2a" text-anchor="middle"><text x="519.3" y="403.8" transform="rotate(-76 519.3 403.8)">07</text><text x="551.1" y="327.9" transform="rotate(-61 551.1 327.9)">08</text><text x="600.0" y="261.4" transform="rotate(-46 600.0 261.4)">09</text><text x="663.1" y="208.4" transform="rotate(-32 663.1 208.4)">10</text><text x="736.5" y="172.3" transform="rotate(-17 736.5 172.3)">11</text><text x="973.2" y="180.5" transform="rotate(25 973.2 180.5)">14</text><text x="1041.5" y="221.6" transform="rotate(38 1041.5 221.6)">15</text><text x="1097.2" y="278.7" transform="rotate(52 1097.2 278.7)">16</text><text x="1136.9" y="348.4" transform="rotate(66 1136.9 348.4)">17</text></g>
<path d="M447 427.200L505.3 436.3L732 470.8" stroke="#2540b8" stroke-width="1.45" fill="none"/>
<defs><radialGradient id="sg"><stop offset="0" stop-color="#fff200" stop-opacity=".95"/><stop offset=".55" stop-color="#f4ee30" stop-opacity=".7"/><stop offset="1" stop-color="#e8f060" stop-opacity="0"/></radialGradient></defs>
<circle cx="505.3" cy="436.3" r="12" fill="url(#sg)"/><circle cx="505.3" cy="436.3" r="3.600" fill="#e0101a" stroke="#a00" stroke-width=".6"/>
<!--BUILDING-->
<path d="M800.0 368.0 L950.0 382.0 L951.0 454.0 L870.0 498.0 L855.0 505.0 L855.0 440.0 L800.0 434.0 Z" fill="#5d6066" opacity=".12"/>
<path d="M735.0 431.0 L855.0 443.0 L855.0 500.0 L735.0 487.0 Z" fill="#6a6d73" opacity=".22"/>
<path d="M733.0 324.0 L988.0 347.5 L988.0 507.0 L733.0 486.0 Z" fill="#f0f4fa" opacity=".65"/>
<path d="M733.1 321.3h2.600V486.0h-2.600zM740.2 322.0h2.600V486.7h-2.600zM747.3 322.6h2.600V487.3h-2.600zM754.4 323.3h2.600V488.0h-2.600zM761.5 323.9h2.600V488.6h-2.600zM768.6 324.6h2.600V489.3h-2.600zM775.7 325.3h2.600V489.9h-2.600zM782.8 325.9h2.600V490.6h-2.600zM789.9 326.6h2.600V491.2h-2.600zM797.0 327.2h2.600V491.9h-2.600zM804.1 327.9h2.600V492.5h-2.600zM811.2 328.6h2.600V493.2h-2.600zM818.3 329.2h2.600V493.8h-2.600zM825.4 329.9h2.600V494.5h-2.600zM832.5 330.5h2.600V495.2h-2.600zM839.6 331.2h2.600V495.8h-2.600zM846.7 331.9h2.600V496.5h-2.600zM853.8 332.5h2.600V497.1h-2.600zM860.9 333.2h2.600V497.8h-2.600zM868.0 333.8h2.600V498.4h-2.600zM875.1 334.5h2.600V499.1h-2.600zM882.2 335.2h2.600V499.7h-2.600zM889.3 335.8h2.600V500.4h-2.600zM896.4 336.5h2.600V501.0h-2.600zM903.5 337.1h2.600V501.7h-2.600zM910.6 337.8h2.600V502.3h-2.600zM917.7 338.5h2.600V503.0h-2.600zM924.8 339.1h2.600V503.6h-2.600zM931.9 339.8h2.600V504.3h-2.600zM939.0 340.4h2.600V505.0h-2.600zM946.1 341.1h2.600V505.6h-2.600zM953.2 341.8h2.600V456.0h-2.600zM960.3 342.4h2.600V456.0h-2.600zM967.4 343.1h2.600V456.0h-2.600zM974.5 343.7h2.600V456.0h-2.600zM981.6 344.4h2.600V456.0h-2.600z" fill="#cdcdcd"/>
<path d="M735.6 321.6h3V486.0h-3zM742.7 322.3h3V486.7h-3zM749.8 322.9h3V487.3h-3zM756.9 323.6h3V488.0h-3zM764.0 324.2h3V488.6h-3zM771.1 324.9h3V489.3h-3zM778.2 325.6h3V489.9h-3zM785.3 326.2h3V490.6h-3zM792.4 326.9h3V491.2h-3zM799.5 327.5h3V491.9h-3zM806.6 328.2h3V492.5h-3zM813.7 328.9h3V493.2h-3zM820.8 329.5h3V493.8h-3zM827.9 330.2h3V494.5h-3zM835.0 330.8h3V495.2h-3zM842.1 331.5h3V495.8h-3zM849.2 332.2h3V496.5h-3zM856.3 332.8h3V497.1h-3zM863.4 333.5h3V497.8h-3zM870.5 334.1h3V498.4h-3zM877.6 334.8h3V499.1h-3zM884.7 335.5h3V499.7h-3zM891.8 336.1h3V500.4h-3zM898.9 336.8h3V501.0h-3zM906.0 337.4h3V501.7h-3zM913.1 338.1h3V502.3h-3zM920.2 338.8h3V503.0h-3zM927.3 339.4h3V503.6h-3zM934.4 340.1h3V504.3h-3zM941.5 340.7h3V505.0h-3zM948.6 341.4h3V505.6h-3zM955.7 342.1h3V456.0h-3zM962.8 342.7h3V456.0h-3zM969.9 343.4h3V456.0h-3zM977.0 344.0h3V456.0h-3zM984.1 344.7h3V456.0h-3z" fill="#4c4c4c"/>
<path d="M895.0 377.0 L950.0 382.0 L984.0 368.0 L984.0 445.0 L951.0 454.0 L895.0 485.0 Z" fill="#3c3f45" opacity=".2"/>
<path d="M984.5 344.3 L988.0 344.6 L988.0 507.0 L984.5 507.0 Z" fill="#646464" />
<path d="M752.5 380.0 L755.0 381.0 L756.0 385.0 L759.0 388.0 L760.5 396.0 L759.5 404.0 L758.5 414.0 L754.0 414.5 L751.0 414.0 L748.0 414.5 L747.0 404.0 L745.0 396.0 L746.0 389.0 L749.0 386.0 L750.0 381.0 Z" fill="#595959" />
<path d="M800.0 362.5 L830.0 350.0 L982.5 363.0 L950.0 377.0 Z" fill="#8b8b8b" />
<path d="M800.0 362.5 L950.0 377.0 L950.0 382.0 L800.0 367.5 Z" fill="#c3c3c3" />
<path d="M950.0 377.0 L982.5 363.0 L982.5 367.5 L950.0 382.0 Z" fill="#7a7a7a" />
<path d="M700.0 423.8 L732.5 410.2 L885.0 427.5 L855.0 438.8 Z" fill="#727272" />
<path d="M699.4 424.0 L855.0 438.9 L855.0 445.8 L699.4 431.0 Z" fill="#c6c6c6" />
<path d="M715 419l60 7M730 415l70 8M760 424l60 6M790 424l60 6" stroke="#6a6a6a" stroke-width="1.200" stroke-dasharray="3 4" fill="none"/>
<path d="M742.0 398.5v25.0M778.8 401.8v25.2M815.6 405.2v25.4" stroke="#cfcfcf" stroke-width="1.700" fill="none"/>
<path d="M733 398.700L850 409.400L885 412.500" stroke="#c4c4c4" stroke-width="1.200" fill="none"/>
<path d="M850 409.400v26" stroke="#cfcfcf" stroke-width="1.500" fill="none"/>
<path d="M701.300 395.600L731.900 382.500" stroke="#6f747c" stroke-width="1.300" fill="none"/>
<path d="M701.300 395.600v27.500M705 394v27.500M716.500 389.100v27.300M724.500 385.700v27M731.900 382.500v28" stroke="#cfd2d6" stroke-width="1.300" fill="none"/>
<path d="M701.300 402L731.900 389M701.300 408.500L731.900 395.500M701.300 415L731.900 402" stroke="#d4d8de" stroke-width=".8" fill="none"/>
<path d="M855.0 512.5 L951.2 526.2 L951.2 453.8 L943.9 453.8 L943.9 457.8 L936.5 457.8 L936.5 461.9 L929.1 461.9 L929.1 466.0 L921.7 466.0 L921.7 470.1 L914.3 470.1 L914.3 474.2 L906.9 474.2 L906.9 478.3 L899.5 478.3 L899.5 482.4 L892.2 482.4 L892.2 486.5 L884.8 486.5 L884.8 490.6 L877.4 490.6 L877.4 494.7 L870.0 494.7 L870.0 498.8 L870.0 498.8 L855.0 505.0 Z" fill="#b9b9b9" />
<path d="M951.2 453.8 L981.2 442.0 L986.2 442.5 L986.2 507.5 L951.2 526.2 Z" fill="#7b7b7b" />
<path d="M981.2 442.0 L986.2 442.5 L986.2 507.5 L981.2 510.0 Z" fill="#6a6a6a" />
<path d="M700.0 498.8 L733.8 485.0 L870.0 497.5 L855.0 505.0 Z" fill="#8d8d8d" />
<path d="M700.0 498.8 L855.0 505.0 L855.0 512.5 L700.0 504.3 Z" fill="#bdbdbd" />
<path d="M771.0 452.5 L773.5 453.5 L774.5 457.0 L777.0 460.0 L777.5 470.0 L776.0 480.0 L775.0 496.0 L772.0 496.5 L770.0 490.0 L768.0 496.0 L765.5 495.5 L766.5 480.0 L764.5 470.0 L762.5 462.0 L766.0 458.0 L768.5 454.0 Z" fill="#5b5b5b" />
<!--/BUILDING-->
</svg>
<!--VIEW3D-END-->

<!-- right panel -->
<div class="ph" style="top:163.500px;height:28.300px;line-height:27px;border-radius:4px;letter-spacing:0">GEOGRAPHIC LOCATION<svg class="chev" style="top:7px" width="10" height="14"><path d="M2 1.500l5.500 5.500L2 12.500" fill="none" stroke="#8a8a8a" stroke-width="1.600"/></svg></div>
<div class="ph" style="top:196px;height:29px;line-height:28px;border-radius:4px 4px 0 0;letter-spacing:0">DATE AND TIME<svg class="chev" style="top:9px;right:4.500px" width="14" height="10"><path d="M1.500 2l5.500 5.500L12.500 2" fill="none" stroke="#8a8a8a" stroke-width="1.600"/></svg></div>
<div class="pr" style="top:225px;height:28px;line-height:28px;border-top:none"><b style="letter-spacing:-.24px">Date:</b><s style="color:#a78a2d;letter-spacing:-.14px">27 Sep 2021</s><div class="abs" style="left:0;bottom:0;width:139px;height:4.600px;background:linear-gradient(#f3c94a,#e0a21c)"></div></div>
<div class="pr" style="top:253px;height:27.500px;line-height:26.500px;border-radius:0 0 4px 4px;overflow:hidden"><b style="letter-spacing:-.16px">Time:</b><s style="color:#a78a2d;letter-spacing:-.25px">06:35</s><div class="abs" style="left:0;bottom:0;width:52.500px;height:4.600px;background:linear-gradient(#f3c94a,#e0a21c)"></div></div>
<div class="ph" style="top:285.300px;height:28.700px;line-height:28px;border-radius:4px 4px 0 0;letter-spacing:0;padding-left:6.500px">SOLAR INFORMATION<svg class="chev" style="top:7.500px" width="10" height="14"><path d="M2 1.500l5.500 5.500L2 12.500" fill="none" stroke="#8a8a8a" stroke-width="1.600"/></svg></div>
<div class="pr" style="top:314px;height:27.500px;line-height:26px;border-top:none"><b>Azi / Alt:</b><s>92.60° / 10.75°</s></div>
<div class="pr" style="top:341.500px;height:28px;line-height:27px"><b>Rise / Set:</b><s>05:49 / 17:54</s></div>
<div class="pr" style="top:369.500px;height:28.200px;line-height:27px;border-radius:0 0 4px 4px"><b>Daylight:</b><s style="letter-spacing:-.13px">12:06 Hrs</s></div>
<div class="ph" style="top:402.800px;height:27.900px;line-height:27px;border-radius:4px;letter-spacing:0">TWILIGHT TIMES<svg class="chev" style="top:7px" width="10" height="14"><path d="M2 1.500l5.500 5.500L2 12.500" fill="none" stroke="#8a8a8a" stroke-width="1.600"/></svg></div>
<!-- resize cursor -->
<svg class="abs" style="left:1128px;top:268px" width="24" height="12"><path d="M1.500 6l4.500-4v2.700h11V2l4.500 4-4.500 4V7.300H6V10z" fill="#9a9a9a" stroke="#fff" stroke-width="1.200" stroke-linejoin="round"/><path d="M1.800 6l4-3.500v7zM21.200 6l-4-3.500v7z" fill="#fff" stroke="#222" stroke-width=".8" stroke-linejoin="round"/></svg>

<div class="abs" id="bot"></div>
</body>
</html>
